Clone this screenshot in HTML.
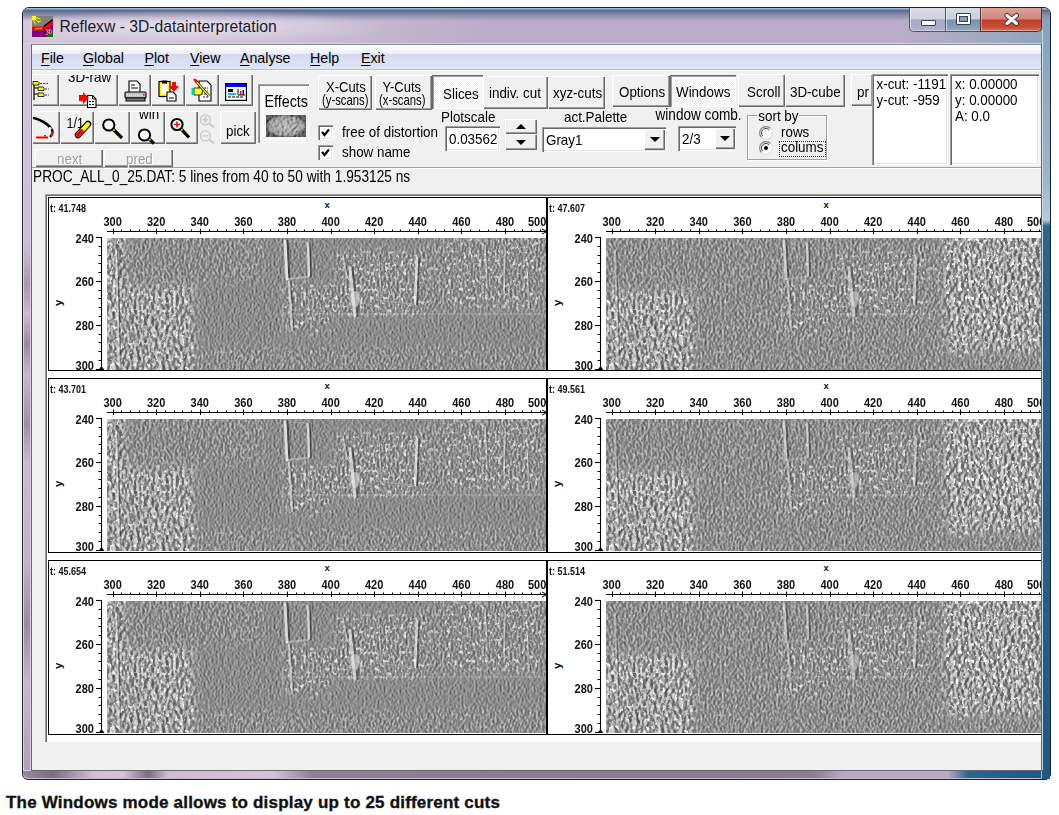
<!DOCTYPE html><html><head><meta charset="utf-8"><style>
html,body{margin:0;padding:0;background:#fff;width:1059px;height:815px;overflow:hidden;position:relative;font-family:"Liberation Sans",sans-serif;}
.t{position:absolute;white-space:nowrap;color:#000;line-height:1;}
div{box-sizing:border-box;}
</style></head><body>
<div style="position:absolute;left:22px;top:7px;width:1029px;height:773px;border:1px solid #1b2230;border-radius:7px 7px 6px 6px;background:#bcaeca;"></div>
<div style="position:absolute;left:23px;top:8px;width:1027px;height:36px;border-radius:6px 6px 0 0;background:linear-gradient(90deg,#d2c8da 0%,#cbbfd4 25%,#bcaccb 45%,#bcaccb 85%,#a8aac4 92%,#8aa4bc 100%);"></div>
<div style="position:absolute;left:23px;top:8px;width:1027px;height:14px;border-radius:6px 6px 0 0;background:linear-gradient(180deg,#a9bacb 0px,#a9bacb 1px,#4d6a8c 2px,#8c8cac 7px,rgba(188,172,203,0) 13px);"></div>
<div style="position:absolute;left:30px;top:10px;width:360px;height:34px;background:radial-gradient(ellipse 55% 50% at 45% 50%,rgba(238,234,242,0.85) 0%,rgba(225,216,232,0.5) 55%,rgba(200,190,210,0) 100%);"></div>
<div style="position:absolute;left:23px;top:43px;width:1018px;height:1px;background:#ddd2e4;"></div>
<div style="position:absolute;left:23px;top:44px;width:8px;height:726px;background:linear-gradient(180deg,#d2c6da 0px,#cdbfd6 200px,#a898ac 240px,#cbbad0 270px,#9a8aa0 300px,#c8b8cc 330px,#a090a6 380px,#cbbbd0 420px,#c2b2c8 520px,#9a8aa0 580px,#c8b8cc 640px,#b0a0b4 726px);box-shadow:inset 1px 0 0 #ddd4e2, inset -1px 0 0 #d8cde0;"></div>
<div style="position:absolute;left:23px;top:770px;width:1018px;height:9px;border-radius:0 0 0 6px;background:linear-gradient(90deg,#9a8aa0 0px,#7c6c80 30px,#d2bed6 70px,#d6c2da 100px,#7c6c80 125px,#d0bcd4 145px,#d4c2d8 250px,#8e7e94 290px,#8a7c90 650px,#8a7e90 790px,#b8a8c8 820px,#b8a8c8 925px,#2a6590 945px,#1e5a84 100%);box-shadow:inset 0 1px 0 #d8cde0, inset 0 -1px 0 #c8bccc;"></div>
<div style="position:absolute;left:1042px;top:30px;width:8px;height:749px;background:linear-gradient(180deg,#86a4bc 0px,#9ab6ca 150px,#b8ccda 190px,#2a6590 196px,#1e5a84 100%);box-shadow:inset 1px 0 0 #c8d8e4;"></div>
<div style="position:absolute;left:1042px;top:770px;width:8px;height:9px;border-radius:0 0 6px 0;background:#1e5a84;"></div>
<div style="position:absolute;left:31px;top:44px;width:1011px;height:727px;border:1px solid #6a6670;border-top-color:#8a8690;background:#f0f0f0;"></div>
<svg style="position:absolute;left:32px;top:16px" width="21" height="21" viewBox="0 0 21 21">
<rect x="0" y="0" width="21" height="21" fill="#808080"/>
<rect x="0" y="10.5" width="12" height="4" fill="#ff0000"/>
<rect x="0" y="14.5" width="12" height="6.5" fill="#800080"/>
<polygon points="12,10 21,3.5 21,8.5 12,14.5" fill="#ff0000"/>
<polygon points="12,14.5 21,8.5 21,21 12,21" fill="#800080"/>
<polygon points="14,21 21,16 21,21" fill="#008000"/>
<path d="M12 10 L21 3.5" stroke="#000" stroke-width="1.2"/>
<path d="M12 10 V21" stroke="#400040" stroke-width="0.8"/>
<path d="M3 12.5 h7" stroke="#ffa000" stroke-width="1.6" stroke-dasharray="2 0.6"/>
<circle cx="2" cy="2" r="2.6" fill="#ffff00"/>
<path d="M4 4 L7 7 M5 2 L8.5 3 M2 5 L3.5 8.5 M6 5.5 L9 5" stroke="#ffff00" stroke-width="0.9"/>
<path d="M14 14 h2.5 l-1.5 2 h1.5 l-1 2.5 h-2 M17.5 13 v5 q2.5 -0.5 2 -3 q-0.5 -2 -2 -2" stroke="#e0a030" stroke-width="0.9" fill="none"/>
</svg>
<div class="t" style="left:59.5px;top:19.21px;font-size:15.7px;transform:scaleY(1.0);transform-origin:0 13.29px;color:#1a1a2a;">Reflexw - 3D-datainterpretation</div>
<div style="position:absolute;left:909px;top:8px;width:37px;height:24px;border:1px solid #4e5664;border-top:none;border-radius:0 0 0 5px;background:linear-gradient(180deg,#dcdce8 0%,#d0d0e0 48%,#a4a6c6 52%,#b0b4d0 100%);box-shadow:inset 1px 0 0 rgba(255,255,255,0.5), inset 0 -1px 0 rgba(255,255,255,0.4);"></div>
<div style="position:absolute;left:945px;top:8px;width:36px;height:24px;border:1px solid #4e5664;border-top:none;background:linear-gradient(180deg,#d8dce6 0%,#c8d0dc 48%,#7890a8 52%,#90a8bc 100%);box-shadow:inset 1px 0 0 rgba(255,255,255,0.5), inset 0 -1px 0 rgba(255,255,255,0.4);"></div>
<div style="position:absolute;left:980px;top:8px;width:62px;height:24px;border:1px solid #5a3028;border-top:none;border-radius:0 0 5px 0;background:linear-gradient(180deg,#dca49c 0%,#d08478 48%,#c03e28 52%,#c85038 85%,#d87860 100%);box-shadow:inset 1px 0 0 rgba(255,255,255,0.35), inset 0 -1px 0 rgba(255,255,255,0.3);"></div>
<div style="position:absolute;left:921px;top:20px;width:15px;height:6px;background:#fff;border:1px solid #3a4050;border-radius:1px;"></div>
<div style="position:absolute;left:956px;top:13px;width:15px;height:12px;border:1px solid #3a4050;background:#fff;border-radius:1px;"></div>
<div style="position:absolute;left:959px;top:16px;width:9px;height:6px;border:1px solid #3a4050;background:#8a9cb4;"></div>
<svg style="position:absolute;left:1003px;top:12px" width="18" height="15"><path d="M4 3.5 L13.5 11.5 M13.5 3.5 L4 11.5" stroke="#4a3a3a" stroke-width="5" stroke-linecap="round"/><path d="M4 3.5 L13.5 11.5 M13.5 3.5 L4 11.5" stroke="#fff" stroke-width="3" stroke-linecap="round"/></svg>
<div style="position:absolute;left:32px;top:45px;width:1009px;height:25px;background:linear-gradient(180deg,#ffffff 0px,#f6f7fb 4px,#eceff8 8.5px,#d4daee 9.5px,#d8deef 14px,#dfe5f4 23px);border-bottom:1px solid #b8c0d4;"></div>
<div style="position:absolute;left:32px;top:70px;width:1009px;height:1px;background:#f8f8f8;"></div>
<div class="t" style="left:41px;top:51.3px;font-size:14.2px;color:#000;"><span style="text-decoration:underline;text-underline-offset:1.5px">F</span>ile</div>
<div class="t" style="left:83px;top:51.3px;font-size:14.2px;color:#000;"><span style="text-decoration:underline;text-underline-offset:1.5px">G</span>lobal</div>
<div class="t" style="left:144.5px;top:51.3px;font-size:14.2px;color:#000;"><span style="text-decoration:underline;text-underline-offset:1.5px">P</span>lot</div>
<div class="t" style="left:190px;top:51.3px;font-size:14.2px;color:#000;"><span style="text-decoration:underline;text-underline-offset:1.5px">V</span>iew</div>
<div class="t" style="left:240px;top:51.3px;font-size:14.2px;color:#000;"><span style="text-decoration:underline;text-underline-offset:1.5px">A</span>nalyse</div>
<div class="t" style="left:310px;top:51.3px;font-size:14.2px;color:#000;"><span style="text-decoration:underline;text-underline-offset:1.5px">H</span>elp</div>
<div class="t" style="left:361px;top:51.3px;font-size:14.2px;color:#000;"><span style="text-decoration:underline;text-underline-offset:1.5px">E</span>xit</div>
<div style="position:absolute;left:32px;top:167px;width:1009px;height:1px;background:#a0a0a0;"></div>
<div style="position:absolute;left:32px;top:168px;width:1009px;height:1px;background:#fff;"></div>
<div style="position:absolute;left:32px;top:74px;width:27px;height:32px;background:#f0f0f0;box-shadow:inset 1px 1px 0 #fff, inset -1px -1px 0 #696969, inset -2px -2px 0 #a0a0a0;"></div>
<div style="position:absolute;left:59px;top:74px;width:59px;height:32px;background:#f0f0f0;box-shadow:inset 1px 1px 0 #fff, inset -1px -1px 0 #696969, inset -2px -2px 0 #a0a0a0;"></div>
<div style="position:absolute;left:118px;top:74px;width:33px;height:32px;background:#f0f0f0;box-shadow:inset 1px 1px 0 #fff, inset -1px -1px 0 #696969, inset -2px -2px 0 #a0a0a0;"></div>
<div style="position:absolute;left:151px;top:74px;width:34px;height:32px;background:#f0f0f0;box-shadow:inset 1px 1px 0 #fff, inset -1px -1px 0 #696969, inset -2px -2px 0 #a0a0a0;"></div>
<div style="position:absolute;left:185px;top:74px;width:34px;height:32px;background:#f0f0f0;box-shadow:inset 1px 1px 0 #fff, inset -1px -1px 0 #696969, inset -2px -2px 0 #a0a0a0;"></div>
<div style="position:absolute;left:219px;top:74px;width:34px;height:32px;background:#f0f0f0;box-shadow:inset 1px 1px 0 #fff, inset -1px -1px 0 #696969, inset -2px -2px 0 #a0a0a0;"></div>
<div style="position:absolute;left:32px;top:111px;width:28px;height:33px;background:#f0f0f0;box-shadow:inset 1px 1px 0 #fff, inset -1px -1px 0 #696969, inset -2px -2px 0 #a0a0a0;"></div>
<div style="position:absolute;left:60px;top:111px;width:34px;height:33px;background:#f0f0f0;box-shadow:inset 1px 1px 0 #fff, inset -1px -1px 0 #696969, inset -2px -2px 0 #a0a0a0;"></div>
<div style="position:absolute;left:94px;top:111px;width:36px;height:33px;background:#f0f0f0;box-shadow:inset 1px 1px 0 #fff, inset -1px -1px 0 #696969, inset -2px -2px 0 #a0a0a0;"></div>
<div style="position:absolute;left:130px;top:111px;width:35px;height:33px;background:#f0f0f0;box-shadow:inset 1px 1px 0 #fff, inset -1px -1px 0 #696969, inset -2px -2px 0 #a0a0a0;"></div>
<div style="position:absolute;left:165px;top:111px;width:33px;height:33px;background:#f0f0f0;box-shadow:inset 1px 1px 0 #fff, inset -1px -1px 0 #696969, inset -2px -2px 0 #a0a0a0;"></div>
<div style="position:absolute;left:220px;top:111px;width:36px;height:33px;background:#f0f0f0;box-shadow:inset 1px 1px 0 #fff, inset -1px -1px 0 #696969, inset -2px -2px 0 #a0a0a0;"></div>
<div class="t" style="left:226px;top:124.66px;font-size:13.4px;transform:scaleY(1.15);transform-origin:0 11.34px;">pick</div>
<div style="position:absolute;left:35px;top:149px;width:68px;height:18px;background:#f0f0f0;box-shadow:inset 1px 1px 0 #fff, inset -1px -1px 0 #696969, inset -2px -2px 0 #a0a0a0;"></div>
<div style="position:absolute;left:104px;top:149px;width:69px;height:18px;background:#f0f0f0;box-shadow:inset 1px 1px 0 #fff, inset -1px -1px 0 #696969, inset -2px -2px 0 #a0a0a0;"></div>
<div class="t" style="left:57px;top:152.66px;font-size:13.4px;transform:scaleY(1.15);transform-origin:0 11.34px;color:#a0a0a0;text-shadow:1px 1px 0 #fff;">next</div>
<div class="t" style="left:126px;top:152.66px;font-size:13.4px;transform:scaleY(1.15);transform-origin:0 11.34px;color:#a0a0a0;text-shadow:1px 1px 0 #fff;">pred</div>
<div style="position:absolute;left:60px;top:75px;width:56px;height:12px;overflow:hidden"><div class="t" style="left:8px;top:-4.3px;font-size:13.4px;transform:scaleY(1.15);transform-origin:0 12px">3D-raw</div></div>
<div style="position:absolute;left:131px;top:112px;width:32px;height:10px;overflow:hidden"><div class="t" style="left:8px;top:-3.8px;font-size:13.4px;transform:scaleY(1.15);transform-origin:0 12px">win</div></div>
<div style="position:absolute;left:258px;top:84px;width:51px;height:59px;background:repeating-conic-gradient(#fff 0% 25%, #f0f0f0 0% 50%) 0 0/2px 2px;box-shadow:inset 1px 1px 0 #a0a0a0, inset 2px 2px 0 #888, inset -1px -1px 0 #fff, inset -2px -2px 0 #e8e8e8;"></div>
<div class="t" style="left:264.5px;top:95.40px;font-size:14.3px;transform:scaleY(1.15);transform-origin:0 12.10px;">Effects</div>
<svg style="position:absolute;left:266px;top:115px" width="40" height="22"><defs><filter id="fe" x="0" y="0" width="100%" height="100%"><feTurbulence type="fractalNoise" baseFrequency="0.35" numOctaves="2" seed="7"/><feColorMatrix type="matrix" values="0 0 0 0 0  0 0 0 0 0  0 0 0 0 0  1 0 0 0 0" result="h"/><feGaussianBlur stdDeviation="0.6" result="hb"/><feDiffuseLighting in="hb" surfaceScale="2" diffuseConstant="1.6" lighting-color="#a0a0a0"><feDistantLight azimuth="200" elevation="40"/></feDiffuseLighting></filter><radialGradient id="eg"><stop offset="0" stop-color="#fff" stop-opacity="0.3"/><stop offset="0.7" stop-color="#fff" stop-opacity="0"/><stop offset="1" stop-color="#000" stop-opacity="0.4"/></radialGradient></defs><rect width="40" height="22" filter="url(#fe)"/><rect width="40" height="22" fill="url(#eg)"/></svg>
<div style="position:absolute;left:318px;top:75px;width:54px;height:35px;background:#f0f0f0;box-shadow:inset 1px 1px 0 #fff, inset -1px -1px 0 #696969, inset -2px -2px 0 #a0a0a0;"></div>
<div class="t" style="left:326px;top:81.00px;font-size:13px;transform:scaleY(1.1);transform-origin:0 11.00px;">X-Cuts</div>
<div class="t" style="left:322px;top:96.43px;font-size:11.3px;transform:scaleY(1.25);transform-origin:0 9.57px;">(y-scans)</div>
<div style="position:absolute;left:375px;top:75px;width:57px;height:35px;background:#f0f0f0;box-shadow:inset 1px 1px 0 #fff, inset -1px -1px 0 #696969, inset -2px -2px 0 #a0a0a0;"></div>
<div class="t" style="left:382.5px;top:81.00px;font-size:13px;transform:scaleY(1.1);transform-origin:0 11.00px;">Y-Cuts</div>
<div class="t" style="left:379px;top:96.43px;font-size:11.3px;transform:scaleY(1.25);transform-origin:0 9.57px;">(x-scans)</div>
<div style="position:absolute;left:432px;top:75px;width:51px;height:34px;background:#f7f7f7;box-shadow:inset 1px 1px 0 #696969, inset 2px 2px 0 #a0a0a0, inset -1px -1px 0 #fff;background:repeating-conic-gradient(#fff 0% 25%, #f0f0f0 0% 50%) 0 0/2px 2px;"></div>
<div class="t" style="left:443px;top:87.66px;font-size:13.4px;transform:scaleY(1.15);transform-origin:0 11.34px;">Slices</div>
<div style="position:absolute;left:483px;top:76px;width:65px;height:33px;background:#f0f0f0;box-shadow:inset 1px 1px 0 #fff, inset -1px -1px 0 #696969, inset -2px -2px 0 #a0a0a0;"></div>
<div class="t" style="left:489px;top:87.16px;font-size:13.4px;transform:scaleY(1.15);transform-origin:0 11.34px;">indiv. cut</div>
<div style="position:absolute;left:548px;top:76px;width:57px;height:33px;background:#f0f0f0;box-shadow:inset 1px 1px 0 #fff, inset -1px -1px 0 #696969, inset -2px -2px 0 #a0a0a0;"></div>
<div class="t" style="left:553px;top:87.16px;font-size:13.4px;transform:scaleY(1.15);transform-origin:0 11.34px;">xyz-cuts</div>
<div style="position:absolute;left:612px;top:75px;width:58px;height:32px;background:#f0f0f0;box-shadow:inset 1px 1px 0 #fff, inset -1px -1px 0 #696969, inset -2px -2px 0 #a0a0a0;"></div>
<div class="t" style="left:619px;top:85.66px;font-size:13.4px;transform:scaleY(1.15);transform-origin:0 11.34px;">Options</div>
<div style="position:absolute;left:670px;top:75px;width:66px;height:32px;background:#f7f7f7;box-shadow:inset 1px 1px 0 #696969, inset 2px 2px 0 #a0a0a0, inset -1px -1px 0 #fff;background:repeating-conic-gradient(#fff 0% 25%, #f0f0f0 0% 50%) 0 0/2px 2px;"></div>
<div class="t" style="left:676px;top:86.16px;font-size:13.4px;transform:scaleY(1.15);transform-origin:0 11.34px;">Windows</div>
<div style="position:absolute;left:738px;top:74px;width:47px;height:33px;background:#f0f0f0;box-shadow:inset 1px 1px 0 #fff, inset -1px -1px 0 #696969, inset -2px -2px 0 #a0a0a0;"></div>
<div class="t" style="left:747px;top:85.66px;font-size:13.4px;transform:scaleY(1.15);transform-origin:0 11.34px;">Scroll</div>
<div style="position:absolute;left:785px;top:74px;width:60px;height:33px;background:#f0f0f0;box-shadow:inset 1px 1px 0 #fff, inset -1px -1px 0 #696969, inset -2px -2px 0 #a0a0a0;"></div>
<div class="t" style="left:790px;top:85.66px;font-size:13.4px;transform:scaleY(1.15);transform-origin:0 11.34px;">3D-cube</div>
<div style="position:absolute;left:851px;top:74px;width:22px;height:32px;background:#f0f0f0;box-shadow:inset 1px 1px 0 #fff, inset -1px -1px 0 #696969, inset -2px -2px 0 #a0a0a0;"></div>
<div class="t" style="left:857px;top:85.66px;font-size:13.4px;transform:scaleY(1.15);transform-origin:0 11.34px;">pr</div>
<div style="position:absolute;left:318px;top:125px;width:15px;height:15px;background:#fff;box-shadow:inset 1px 1px 0 #a0a0a0, inset 2px 2px 0 #696969, inset -1px -1px 0 #fff, inset -2px -2px 0 #e3e3e3;"></div>
<svg style="position:absolute;left:320px;top:127px" width="11" height="11"><path d="M2 5 L4.5 8 L9 2.5" stroke="#000" stroke-width="2.2" fill="none"/></svg>
<div class="t" style="left:342px;top:126.36px;font-size:13.4px;transform:scaleY(1.15);transform-origin:0 11.34px;">free of distortion</div>
<div style="position:absolute;left:318px;top:145px;width:15px;height:15px;background:#fff;box-shadow:inset 1px 1px 0 #a0a0a0, inset 2px 2px 0 #696969, inset -1px -1px 0 #fff, inset -2px -2px 0 #e3e3e3;"></div>
<svg style="position:absolute;left:320px;top:147px" width="11" height="11"><path d="M2 5 L4.5 8 L9 2.5" stroke="#000" stroke-width="2.2" fill="none"/></svg>
<div class="t" style="left:342px;top:146.36px;font-size:13.4px;transform:scaleY(1.15);transform-origin:0 11.34px;">show name</div>
<div class="t" style="left:441px;top:110.66px;font-size:13.4px;transform:scaleY(1.15);transform-origin:0 11.34px;">Plotscale</div>
<div style="position:absolute;left:445px;top:126px;width:55px;height:25px;background:#fff;box-shadow:inset 1px 1px 0 #a0a0a0, inset 2px 2px 0 #696969, inset -1px -1px 0 #fff, inset -2px -2px 0 #e3e3e3;"></div>
<div class="t" style="left:449px;top:132.66px;font-size:13.4px;transform:scaleY(1.15);transform-origin:0 11.34px;">0.03562</div>
<div style="position:absolute;left:505px;top:119px;width:32px;height:15px;background:#f0f0f0;box-shadow:inset 1px 1px 0 #fff, inset -1px -1px 0 #696969, inset -2px -2px 0 #a0a0a0;"></div>
<div style="position:absolute;left:505px;top:134px;width:32px;height:16px;background:#f0f0f0;box-shadow:inset 1px 1px 0 #fff, inset -1px -1px 0 #696969, inset -2px -2px 0 #a0a0a0;"></div>
<svg style="position:absolute;left:515px;top:123px" width="12" height="8"><path d="M6 1 L11 6 L1 6 Z" fill="#000"/></svg>
<svg style="position:absolute;left:515px;top:139px" width="12" height="8"><path d="M1 1 L11 1 L6 6 Z" fill="#000"/></svg>
<div class="t" style="left:564px;top:110.66px;font-size:13.4px;transform:scaleY(1.15);transform-origin:0 11.34px;">act.Palette</div>
<div style="position:absolute;left:542px;top:127px;width:124px;height:25px;background:#fff;box-shadow:inset 1px 1px 0 #a0a0a0, inset 2px 2px 0 #696969, inset -1px -1px 0 #fff, inset -2px -2px 0 #e3e3e3;"></div>
<div class="t" style="left:546px;top:133.66px;font-size:13.4px;transform:scaleY(1.15);transform-origin:0 11.34px;">Gray1</div>
<div style="position:absolute;left:644px;top:129px;width:21px;height:21px;background:#f0f0f0;box-shadow:inset 1px 1px 0 #fff, inset -1px -1px 0 #696969, inset -2px -2px 0 #a0a0a0;"></div>
<svg style="position:absolute;left:649px;top:136px" width="12" height="8"><path d="M1 1 L11 1 L6 6 Z" fill="#000"/></svg>
<div class="t" style="left:655.5px;top:108.69px;font-size:13.6px;transform:scaleY(1.15);transform-origin:0 11.51px;">window comb.</div>
<div style="position:absolute;left:678px;top:126px;width:58px;height:25px;background:#fff;box-shadow:inset 1px 1px 0 #a0a0a0, inset 2px 2px 0 #696969, inset -1px -1px 0 #fff, inset -2px -2px 0 #e3e3e3;"></div>
<div class="t" style="left:682px;top:132.66px;font-size:13.4px;transform:scaleY(1.15);transform-origin:0 11.34px;">2/3</div>
<div style="position:absolute;left:715px;top:128px;width:20px;height:21px;background:#f0f0f0;box-shadow:inset 1px 1px 0 #fff, inset -1px -1px 0 #696969, inset -2px -2px 0 #a0a0a0;"></div>
<svg style="position:absolute;left:719px;top:135px" width="12" height="8"><path d="M1 1 L11 1 L6 6 Z" fill="#000"/></svg>
<div style="position:absolute;left:747px;top:115px;width:80px;height:45px;border:1px solid #a0a0a0;box-shadow:1px 1px 0 #fff, inset 1px 1px 0 #fff;"></div>
<div style="position:absolute;left:757px;top:110px;width:42px;height:12px;background:#f0f0f0;"></div>
<div class="t" style="left:758.3px;top:109.86px;font-size:13.4px;transform:scaleY(1.15);transform-origin:0 11.34px;">sort by</div>
<svg style="position:absolute;left:759px;top:126px" width="14" height="14"><circle cx="7" cy="7" r="6" fill="#fff"/><path d="M2.5 11.5 A6 6 0 0 1 11.5 2.5" stroke="#808080" stroke-width="1.2" fill="none"/><path d="M3.8 10.2 A4.3 4.3 0 0 1 10.2 3.8" stroke="#404040" stroke-width="1" fill="none"/><path d="M11.5 2.5 A6 6 0 0 1 2.5 11.5" stroke="#e3e3e3" stroke-width="1.2" fill="none"/></svg>
<div class="t" style="left:781px;top:125.96px;font-size:13.4px;transform:scaleY(1.15);transform-origin:0 11.34px;">rows</div>
<svg style="position:absolute;left:759px;top:141px" width="14" height="14"><circle cx="7" cy="7" r="6" fill="#fff"/><path d="M2.5 11.5 A6 6 0 0 1 11.5 2.5" stroke="#808080" stroke-width="1.2" fill="none"/><path d="M3.8 10.2 A4.3 4.3 0 0 1 10.2 3.8" stroke="#404040" stroke-width="1" fill="none"/><path d="M11.5 2.5 A6 6 0 0 1 2.5 11.5" stroke="#e3e3e3" stroke-width="1.2" fill="none"/><circle cx="7" cy="7" r="2" fill="#000"/></svg>
<div class="t" style="left:781px;top:140.96px;font-size:13.4px;transform:scaleY(1.15);transform-origin:0 11.34px;">colums</div>
<div style="position:absolute;left:779px;top:141px;width:47px;height:16px;border:1px dotted #333;"></div>
<div style="position:absolute;left:872px;top:74px;width:76px;height:91px;background:#fff;box-shadow:inset 1px 1px 0 #a0a0a0, inset 2px 2px 0 #696969, inset -1px -1px 0 #fff, inset -2px -2px 0 #e3e3e3;"></div>
<div class="t" style="left:876.5px;top:78.16px;font-size:13.4px;transform:scaleY(1.15);transform-origin:0 11.34px;">x-cut: -1191</div>
<div class="t" style="left:876.5px;top:94.16px;font-size:13.4px;transform:scaleY(1.15);transform-origin:0 11.34px;">y-cut: -959</div>
<div style="position:absolute;left:950px;top:74px;width:89px;height:91px;background:#fff;box-shadow:inset 1px 1px 0 #a0a0a0, inset 2px 2px 0 #696969, inset -1px -1px 0 #fff, inset -2px -2px 0 #e3e3e3;"></div>
<div class="t" style="left:955px;top:78.16px;font-size:13.4px;transform:scaleY(1.15);transform-origin:0 11.34px;">x: 0.00000</div>
<div class="t" style="left:955px;top:94.16px;font-size:13.4px;transform:scaleY(1.15);transform-origin:0 11.34px;">y: 0.00000</div>
<div class="t" style="left:955px;top:110.16px;font-size:13.4px;transform:scaleY(1.15);transform-origin:0 11.34px;">A: 0.0</div>
<svg style="position:absolute;left:32px;top:78px;overflow:visible" width="20" height="24" viewBox="0 0 20 24"><path d="M2 4 V22 M2 10 H6 M2 16 H6" stroke="#000" stroke-width="1.2" fill="none"/><path d="M1 3.5 h5 l1 1 v2.5 h-6 z" fill="#ff0" stroke="#000" stroke-width="0.8"/><path d="M6 9 h5 l1 1 v2.5 h-6 z" fill="#ff0" stroke="#000" stroke-width="0.8"/><path d="M6 15 h5 l1 1 v2.5 h-6 z" fill="#ff0" stroke="#000" stroke-width="0.8"/><path d="M8 5.5 H16 M13 11 H17 M13 17 H17" stroke="#333" stroke-width="1.2" stroke-dasharray="2 1.2" fill="none"/></svg>
<svg style="position:absolute;left:78px;top:90px;overflow:visible" width="24" height="18" viewBox="0 0 24 18"><path d="M9.5 5.5 h5 l3.5 3.5 v8.5 h-8.5 z" fill="#fff" stroke="#000" stroke-width="1.1"/><path d="M14.5 5.5 v3.5 h3.5" fill="none" stroke="#000" stroke-width="0.9"/><path d="M11 11.5 h6 M11 14.5 h6" stroke="#000" stroke-width="1" stroke-dasharray="2 1"/><path d="M1 5 h4 v-3 l6 6 l-6 6 v-3 h-4 z" fill="#f00"/></svg>
<svg style="position:absolute;left:124px;top:80px;overflow:visible" width="24" height="22" viewBox="0 0 24 22"><path d="M5 1 h8 l3 3 v9 h-11 z" fill="#fff" stroke="#000" stroke-width="1.1"/><path d="M7 5 h4 M7 8 h7" stroke="#000" stroke-width="1"/><rect x="1" y="12" width="21" height="6" rx="1" fill="#c0c0c0" stroke="#000" stroke-width="1.1"/><path d="M3 15 h15" stroke="#fff" stroke-width="1" stroke-dasharray="1 1"/><rect x="19" y="14" width="1.5" height="1.5" fill="#f00"/><rect x="2" y="18" width="19" height="3" fill="#808080" stroke="#000" stroke-width="1"/></svg>
<svg style="position:absolute;left:158px;top:80px;overflow:visible" width="24" height="22" viewBox="0 0 24 22"><rect x="1" y="1.5" width="11" height="15" fill="#ff0" stroke="#000" stroke-width="1.2"/><rect x="3" y="4" width="7" height="10" fill="#fff"/><rect x="4" y="0.5" width="5" height="3" fill="#000"/><path d="M9 12 h6 l3 3 v6 h-9 z" fill="#fff" stroke="#000" stroke-width="1.1"/><path d="M11 18 h5" stroke="#000" stroke-width="1"/><path d="M14 2 h4 v4 h3 l-5 6 l-5 -6 h3 z" fill="#f00"/></svg>
<svg style="position:absolute;left:191px;top:79px;overflow:visible" width="24" height="23" viewBox="0 0 24 23"><path d="M8 2 h8 l4 4 v16 h-12 z" fill="#fff" stroke="#000" stroke-width="1.1"/><path d="M10 9 h7 M10 12 h7 M10 15 h7 M12 18 h5" stroke="#000" stroke-width="0.9" stroke-dasharray="2 1"/><path d="M3 9 h7 l2 3 l-2 4 h-7 z" fill="#ff0" stroke="#000" stroke-width="0.8"/><rect x="0.5" y="9" width="3" height="7" fill="#0cc"/><path d="M4 1 L18 17" stroke="#000" stroke-width="2.6"/><path d="M4 1 L18 17" stroke="#ff0" stroke-width="1.2"/><path d="M3 0 L6 3" stroke="#f00" stroke-width="2"/></svg>
<svg style="position:absolute;left:225px;top:83px;overflow:visible" width="22" height="18" viewBox="0 0 22 18"><rect x="0.6" y="0.6" width="20.8" height="16.8" fill="#fff" stroke="#000" stroke-width="1.2"/><rect x="1" y="1" width="20" height="3" fill="#00f"/><rect x="3" y="6" width="5" height="3" fill="#000"/><rect x="3" y="10" width="8" height="2" fill="#0cc"/><path d="M3 14 h16" stroke="#000" stroke-width="1.2" stroke-dasharray="3 1"/><path d="M13 6 v6 h7" stroke="#000" stroke-width="1" fill="none"/><rect x="15" y="8" width="1.5" height="4" fill="#f00"/><rect x="17.5" y="7" width="1.5" height="5" fill="#00f"/></svg>
<svg style="position:absolute;left:33px;top:116px;overflow:visible" width="24" height="24" viewBox="0 0 24 24"><path d="M1 2 C8 4 14 8 17 11" stroke="#000" stroke-width="2.6" fill="none" stroke-linecap="round"/><path d="M16 11 C20 13 21 17 17 21" stroke="#000" stroke-width="2.2" fill="none"/><circle cx="17" cy="12.5" r="1.5" fill="#fff"/><path d="M18 15 C21 16 21 19 18 21 z" fill="#f00"/><path d="M3 21.5 H15" stroke="#f00" stroke-width="2"/><rect x="11" y="19" width="2" height="1.5" fill="#f00"/></svg>
<div class="t" style="left:66.5px;top:116px;font-size:12.5px;transform:scaleY(1.15);transform-origin:0 0">1/1</div>
<svg style="position:absolute;left:75px;top:121px;overflow:visible" width="16" height="18" viewBox="0 0 16 18"><path d="M3 14 L13 3" stroke="#000" stroke-width="6.5" stroke-linecap="round"/><path d="M3.2 13.8 L12.8 3.2" stroke="#ff0" stroke-width="4.3" stroke-linecap="round"/><path d="M3.2 13.8 L6.5 10.2" stroke="#f00" stroke-width="4.3" stroke-linecap="round"/></svg>
<svg style="position:absolute;left:0;top:0;overflow:visible" width="1" height="1"><circle cx="108.8" cy="125" r="5.6" fill="#fff" stroke="#000" stroke-width="2.0"/><path d="M113.4 129.5 L122 138" stroke="#000" stroke-width="3.2"/><path d="M113.4 129.5 L114.6 130.7" stroke="#ff0" stroke-width="1.5"/></svg>
<svg style="position:absolute;left:0;top:0;overflow:visible" width="1" height="1"><circle cx="144.5" cy="135" r="5.6" fill="#fff" stroke="#000" stroke-width="2.0"/><path d="M149.3 139.3 L154 143.5" stroke="#000" stroke-width="3.2"/><path d="M149.3 139.3 L150.5 140.5" stroke="#ff0" stroke-width="1.5"/></svg>
<svg style="position:absolute;left:0;top:0;overflow:visible" width="1" height="1"><circle cx="177" cy="124.5" r="5.6" fill="#fff" stroke="#000" stroke-width="2.0"/><path d="M181.3 129.2 L189 137.5" stroke="#000" stroke-width="3.2"/><path d="M181.3 129.2 L182.5 130.4" stroke="#ff0" stroke-width="1.5"/><path d="M174 124.5 h6 M177 121.5 v6" stroke="#f00" stroke-width="1.6"/></svg>
<svg style="position:absolute;left:0;top:0;overflow:visible" width="1" height="1"><circle cx="205.4" cy="119.8" r="5" fill="none" stroke="#c8c8c8" stroke-width="1.3"/><path d="M209.7 123.7 L214 127.5" stroke="#c8c8c8" stroke-width="2.2"/><path d="M202.4 119.8 h6 M205.4 116.8 v6" stroke="#c8c8c8" stroke-width="1.6"/></svg>
<svg style="position:absolute;left:0;top:0;overflow:visible" width="1" height="1"><circle cx="205.4" cy="135.9" r="5" fill="none" stroke="#c8c8c8" stroke-width="1.3"/><path d="M209.7 139.7 L214 143.5" stroke="#c8c8c8" stroke-width="2.2"/><path d="M202.4 135.9 h6" stroke="#c8c8c8" stroke-width="1.4"/></svg>
<div class="t" style="left:33px;top:171.40px;font-size:13.7px;transform:scaleY(1.15);transform-origin:0 11.60px;">PROC_ALL_0_25.DAT: 5 lines from 40 to 50 with 1.953125 ns</div>
<div style="position:absolute;left:45px;top:194px;width:996px;height:548px;background:#fff;box-shadow:inset 1px 1px 0 #a0a0a0, inset 2px 2px 0 #696969;"></div>
<svg width="0" height="0" style="position:absolute">
<defs>
<filter id="fw" x="0" y="0" width="100%" height="100%" color-interpolation-filters="sRGB">
<feTurbulence type="fractalNoise" baseFrequency="0.5 0.36" numOctaves="2" seed="4" result="t"/>
<feColorMatrix in="t" type="matrix" values="0 0 0 0 0  0 0 0 0 0  0 0 0 0 0  1 0 0 0 0" result="h"/>
<feGaussianBlur in="h" stdDeviation="0.4" result="hb"/>
<feDiffuseLighting in="hb" surfaceScale="0.75" diffuseConstant="2" lighting-color="#6d6d6d"><feDistantLight azimuth="180" elevation="40"/></feDiffuseLighting>
</filter>
<filter id="fs" x="0" y="0" width="100%" height="100%" color-interpolation-filters="sRGB">
<feTurbulence type="fractalNoise" baseFrequency="0.28 0.21" numOctaves="2" seed="9" result="t"/>
<feColorMatrix in="t" type="matrix" values="0 0 0 0 0  0 0 0 0 0  0 0 0 0 0  1 0 0 0 0" result="h"/>
<feGaussianBlur in="h" stdDeviation="0.65" result="hb"/>
<feDiffuseLighting in="hb" surfaceScale="2.4" diffuseConstant="2" lighting-color="#6e6e6e"><feDistantLight azimuth="180" elevation="45"/></feDiffuseLighting>
<feComponentTransfer><feFuncR type="table" tableValues="0.3 0.5 1"/><feFuncG type="table" tableValues="0.3 0.5 1"/><feFuncB type="table" tableValues="0.3 0.5 1"/></feComponentTransfer>
</filter>
<filter id="fm" x="0" y="0" width="100%" height="100%" color-interpolation-filters="sRGB">
<feTurbulence type="fractalNoise" baseFrequency="0.46 0.32" numOctaves="2" seed="2" result="t"/>
<feColorMatrix in="t" type="matrix" values="0 0 0 0 0  0 0 0 0 0  0 0 0 0 0  1 0 0 0 0" result="h"/>
<feGaussianBlur in="h" stdDeviation="0.4" result="hb"/>
<feDiffuseLighting in="hb" surfaceScale="1.2" diffuseConstant="2" lighting-color="#6a6a6a"><feDistantLight azimuth="180" elevation="41"/></feDiffuseLighting>
<feComponentTransfer><feFuncR type="table" tableValues="0.25 0.5 1"/><feFuncG type="table" tableValues="0.25 0.5 1"/><feFuncB type="table" tableValues="0.25 0.5 1"/></feComponentTransfer>
</filter>
<filter id="sp" x="0" y="0" width="100%" height="100%" color-interpolation-filters="sRGB">
<feTurbulence type="fractalNoise" baseFrequency="0.32 0.24" numOctaves="2" seed="11"/>
<feColorMatrix type="matrix" values="0 0 0 0 1  0 0 0 0 1  0 0 0 0 1  6 0 0 0 -3.5"/>
<feGaussianBlur stdDeviation="0.55"/>
</filter>
<filter id="mb" x="-10%" y="-10%" width="120%" height="120%"><feGaussianBlur stdDeviation="5"/></filter>
<filter id="blur1"><feGaussianBlur stdDeviation="0.8"/></filter>
<mask id="rs0" maskUnits="userSpaceOnUse" x="0" y="0" width="440" height="132"><path filter="url(#mb)" fill="#fff" d="M-20 48 H88 V160 H-20 Z M-20 -20 H20 V48 H-20 Z"/></mask>
<mask id="rm0" maskUnits="userSpaceOnUse" x="0" y="0" width="440" height="132"><path filter="url(#mb)" fill="#fff" d="M20 -20 H160 V48 H88 V60 H20 Z M175 45 H225 V95 H175 Z M225 10 H320 V80 H225 Z M320 -20 H460 V75 H320 Z M-20 105 H460 V160 H-20 Z"/></mask>
<mask id="rs1" maskUnits="userSpaceOnUse" x="0" y="0" width="440" height="132"><path filter="url(#mb)" fill="#fff" d="M-20 52 H88 V160 H-20 Z M338 -20 H460 V115 H338 Z"/></mask>
<mask id="rm1" maskUnits="userSpaceOnUse" x="0" y="0" width="440" height="132"><path filter="url(#mb)" fill="#fff" d="M-20 -20 H460 V160 H-20 Z"/></mask>
<mask id="rf" maskUnits="userSpaceOnUse" x="0" y="0" width="440" height="132"><path filter="url(#mb)" fill="#fff" d="M175 45 H228 V95 H175 Z M228 12 H322 V78 H228 Z M335 0 H440 V72 H335 Z"/></mask>
</defs></svg>
<div style="position:absolute;left:48px;top:197px;width:499px;height:182px;overflow:hidden;">
<div style="position:absolute;left:0;top:0;width:600px;height:1px;background:#000"></div>
<div style="position:absolute;left:0;top:0;width:1px;height:174px;background:#000"></div>
<div style="position:absolute;left:0;top:173px;width:600px;height:1px;background:#000"></div>
<svg style="position:absolute;left:59px;top:41px" width="440" height="132"><rect width="440" height="132" fill="#8a8a8a"/><rect width="440" height="132" filter="url(#fw)"/><g mask="url(#rm0)"><rect width="440" height="132" filter="url(#fm)"/></g><g mask="url(#rs0)"><rect width="440" height="132" filter="url(#fs)"/></g><g mask="url(#rs0)"><rect width="440" height="132" filter="url(#sp)" opacity="0.85"/></g><g mask="url(#rm0)"><rect width="440" height="132" filter="url(#sp)" opacity="0.3"/></g><g mask="url(#rf)"><rect width="440" height="132" filter="url(#sp)" opacity="0.6"/></g><path d="M10.6 12 L13.6 125" stroke="#1a1a1a" stroke-width="1.58" opacity="0.43" stroke-linecap="round" filter="url(#fb)"/><path d="M9 12 L12 125" stroke="#ffffff" stroke-width="1.98" opacity="0.53" stroke-linecap="round" filter="url(#fb)"/><path d="M180.3 3 L182.3 41" stroke="#1a1a1a" stroke-width="2.29" opacity="0.61" stroke-linecap="round" filter="url(#fb)"/><path d="M178 3 L180 41" stroke="#ffffff" stroke-width="2.86" opacity="0.76" stroke-linecap="round" filter="url(#fb)"/><path d="M202.9 5 L203.9 38" stroke="#1a1a1a" stroke-width="1.94" opacity="0.55" stroke-linecap="round" filter="url(#fb)"/><path d="M201 5 L202 38" stroke="#ffffff" stroke-width="2.42" opacity="0.68" stroke-linecap="round" filter="url(#fb)"/><path d="M182.6 41 L202.6 39" stroke="#1a1a1a" stroke-width="1.58" opacity="0.43" stroke-linecap="round" filter="url(#fb)"/><path d="M181 41 L201 39" stroke="#ffffff" stroke-width="1.98" opacity="0.53" stroke-linecap="round" filter="url(#fb)"/><path d="M185.2 3 L201.2 4" stroke="#1a1a1a" stroke-width="1.23" opacity="0.24" stroke-linecap="round" filter="url(#fb)"/><path d="M184 3 L200 4" stroke="#ffffff" stroke-width="1.54" opacity="0.30" stroke-linecap="round" filter="url(#fb)"/><path d="M183.8 44 L186.8 92" stroke="#1a1a1a" stroke-width="1.76" opacity="0.40" stroke-linecap="round" filter="url(#fb)"/><path d="M182 44 L185 92" stroke="#ffffff" stroke-width="2.20" opacity="0.49" stroke-linecap="round" filter="url(#fb)"/><path d="M245.5 30 L250.5 78" stroke="#1a1a1a" stroke-width="2.46" opacity="0.49" stroke-linecap="round" filter="url(#fb)"/><path d="M243 30 L248 78" stroke="#ffffff" stroke-width="3.08" opacity="0.61" stroke-linecap="round" filter="url(#fb)"/><ellipse cx="248" cy="61" rx="4.5" ry="8" fill="#f0f0f0" opacity="0.57" filter="url(#fb)"/><path d="M237.4 18 L241.4 40" stroke="#1a1a1a" stroke-width="1.41" opacity="0.36" stroke-linecap="round" filter="url(#fb)"/><path d="M236 18 L240 40" stroke="#ffffff" stroke-width="1.76" opacity="0.46" stroke-linecap="round" filter="url(#fb)"/><path d="M312.1 20 L310.1 66" stroke="#1a1a1a" stroke-width="2.11" opacity="0.55" stroke-linecap="round" filter="url(#fb)"/><path d="M310 20 L308 66" stroke="#ffffff" stroke-width="2.64" opacity="0.68" stroke-linecap="round" filter="url(#fb)"/><path d="M271.4 62 L307.4 66" stroke="#1a1a1a" stroke-width="1.41" opacity="0.33" stroke-linecap="round" filter="url(#fb)"/><path d="M270 62 L306 66" stroke="#ffffff" stroke-width="1.76" opacity="0.42" stroke-linecap="round" filter="url(#fb)"/><path d="M273.2 22 L275.2 60" stroke="#1a1a1a" stroke-width="1.23" opacity="0.27" stroke-linecap="round" filter="url(#fb)"/><path d="M272 22 L274 60" stroke="#ffffff" stroke-width="1.54" opacity="0.34" stroke-linecap="round" filter="url(#fb)"/><path d="M379.4 8 L381.4 48" stroke="#1a1a1a" stroke-width="1.41" opacity="0.33" stroke-linecap="round" filter="url(#fb)"/><path d="M378 8 L380 48" stroke="#ffffff" stroke-width="1.76" opacity="0.42" stroke-linecap="round" filter="url(#fb)"/><path d="M399.4 10 L398.4 55" stroke="#1a1a1a" stroke-width="1.41" opacity="0.33" stroke-linecap="round" filter="url(#fb)"/><path d="M398 10 L397 55" stroke="#ffffff" stroke-width="1.76" opacity="0.42" stroke-linecap="round" filter="url(#fb)"/><path d="M421.2 30 L423.2 70" stroke="#1a1a1a" stroke-width="1.23" opacity="0.27" stroke-linecap="round" filter="url(#fb)"/><path d="M420 30 L422 70" stroke="#ffffff" stroke-width="1.54" opacity="0.34" stroke-linecap="round" filter="url(#fb)"/><path d="M180 76 H440" stroke="#fff" stroke-width="1" opacity="0.24"/></svg>
<div class="t" style="left:2px;top:7.9px;font-size:9.0px;font-weight:bold;transform:scaleY(1.16);color:#111">t: 41.748</div>
<div class="t" style="left:276.5px;top:3px;font-size:9.5px;font-weight:bold;color:#111">x</div>
<div class="t" style="left:55.40px;top:20.2px;font-size:11px;font-weight:bold;transform:scaleY(1.1);color:#111">300</div>
<div class="t" style="left:99.00px;top:20.2px;font-size:11px;font-weight:bold;transform:scaleY(1.1);color:#111">320</div>
<div class="t" style="left:142.60px;top:20.2px;font-size:11px;font-weight:bold;transform:scaleY(1.1);color:#111">340</div>
<div class="t" style="left:186.20px;top:20.2px;font-size:11px;font-weight:bold;transform:scaleY(1.1);color:#111">360</div>
<div class="t" style="left:229.80px;top:20.2px;font-size:11px;font-weight:bold;transform:scaleY(1.1);color:#111">380</div>
<div class="t" style="left:273.40px;top:20.2px;font-size:11px;font-weight:bold;transform:scaleY(1.1);color:#111">400</div>
<div class="t" style="left:317.00px;top:20.2px;font-size:11px;font-weight:bold;transform:scaleY(1.1);color:#111">420</div>
<div class="t" style="left:360.60px;top:20.2px;font-size:11px;font-weight:bold;transform:scaleY(1.1);color:#111">440</div>
<div class="t" style="left:404.20px;top:20.2px;font-size:11px;font-weight:bold;transform:scaleY(1.1);color:#111">460</div>
<div class="t" style="left:447.80px;top:20.2px;font-size:11px;font-weight:bold;transform:scaleY(1.1);color:#111">480</div>
<div class="t" style="left:480.00px;top:20.2px;font-size:11px;font-weight:bold;transform:scaleY(1.1);color:#111">500</div>
<div class="t" style="left:27.60px;top:36.50px;font-size:11px;font-weight:bold;transform:scaleY(1.1);color:#111">240</div>
<div class="t" style="left:27.60px;top:80.40px;font-size:11px;font-weight:bold;transform:scaleY(1.1);color:#111">260</div>
<div class="t" style="left:27.60px;top:124.30px;font-size:11px;font-weight:bold;transform:scaleY(1.1);color:#111">280</div>
<div class="t" style="left:27.60px;top:164.40px;font-size:11px;font-weight:bold;transform:scaleY(1.1);color:#111">300</div>
<svg style="position:absolute;left:0;top:0" width="600" height="182"><path d="M59 34.5 H499" stroke="#000" stroke-width="1"/><path d="M53.5 41 V173" stroke="#000" stroke-width="1.1"/><path d="M65.5 31.5 V37" stroke="#000" stroke-width="1.1"/><path d="M108.5 31.5 V37" stroke="#000" stroke-width="1.1"/><path d="M152.5 31.5 V37" stroke="#000" stroke-width="1.1"/><path d="M195.5 31.5 V37" stroke="#000" stroke-width="1.1"/><path d="M239.5 31.5 V37" stroke="#000" stroke-width="1.1"/><path d="M283.5 31.5 V37" stroke="#000" stroke-width="1.1"/><path d="M326.5 31.5 V37" stroke="#000" stroke-width="1.1"/><path d="M370.5 31.5 V37" stroke="#000" stroke-width="1.1"/><path d="M413.5 31.5 V37" stroke="#000" stroke-width="1.1"/><path d="M457.5 31.5 V37" stroke="#000" stroke-width="1.1"/><path d="M501.5 31.5 V37" stroke="#000" stroke-width="1.1"/><path d="M73.5 32.5 V34.5" stroke="#000" stroke-width="1"/><path d="M82.5 32.5 V34.5" stroke="#000" stroke-width="1"/><path d="M91.5 32.5 V34.5" stroke="#000" stroke-width="1"/><path d="M99.5 32.5 V34.5" stroke="#000" stroke-width="1"/><path d="M117.5 32.5 V34.5" stroke="#000" stroke-width="1"/><path d="M126.5 32.5 V34.5" stroke="#000" stroke-width="1"/><path d="M134.5 32.5 V34.5" stroke="#000" stroke-width="1"/><path d="M143.5 32.5 V34.5" stroke="#000" stroke-width="1"/><path d="M161.5 32.5 V34.5" stroke="#000" stroke-width="1"/><path d="M169.5 32.5 V34.5" stroke="#000" stroke-width="1"/><path d="M178.5 32.5 V34.5" stroke="#000" stroke-width="1"/><path d="M187.5 32.5 V34.5" stroke="#000" stroke-width="1"/><path d="M204.5 32.5 V34.5" stroke="#000" stroke-width="1"/><path d="M213.5 32.5 V34.5" stroke="#000" stroke-width="1"/><path d="M222.5 32.5 V34.5" stroke="#000" stroke-width="1"/><path d="M230.5 32.5 V34.5" stroke="#000" stroke-width="1"/><path d="M248.5 32.5 V34.5" stroke="#000" stroke-width="1"/><path d="M256.5 32.5 V34.5" stroke="#000" stroke-width="1"/><path d="M265.5 32.5 V34.5" stroke="#000" stroke-width="1"/><path d="M274.5 32.5 V34.5" stroke="#000" stroke-width="1"/><path d="M291.5 32.5 V34.5" stroke="#000" stroke-width="1"/><path d="M300.5 32.5 V34.5" stroke="#000" stroke-width="1"/><path d="M309.5 32.5 V34.5" stroke="#000" stroke-width="1"/><path d="M317.5 32.5 V34.5" stroke="#000" stroke-width="1"/><path d="M335.5 32.5 V34.5" stroke="#000" stroke-width="1"/><path d="M344.5 32.5 V34.5" stroke="#000" stroke-width="1"/><path d="M352.5 32.5 V34.5" stroke="#000" stroke-width="1"/><path d="M361.5 32.5 V34.5" stroke="#000" stroke-width="1"/><path d="M379.5 32.5 V34.5" stroke="#000" stroke-width="1"/><path d="M387.5 32.5 V34.5" stroke="#000" stroke-width="1"/><path d="M396.5 32.5 V34.5" stroke="#000" stroke-width="1"/><path d="M405.5 32.5 V34.5" stroke="#000" stroke-width="1"/><path d="M422.5 32.5 V34.5" stroke="#000" stroke-width="1"/><path d="M431.5 32.5 V34.5" stroke="#000" stroke-width="1"/><path d="M440.5 32.5 V34.5" stroke="#000" stroke-width="1"/><path d="M448.5 32.5 V34.5" stroke="#000" stroke-width="1"/><path d="M466.5 32.5 V34.5" stroke="#000" stroke-width="1"/><path d="M474.5 32.5 V34.5" stroke="#000" stroke-width="1"/><path d="M483.5 32.5 V34.5" stroke="#000" stroke-width="1"/><path d="M492.5 32.5 V34.5" stroke="#000" stroke-width="1"/><path d="M48 40.5 H54" stroke="#000" stroke-width="1.1"/><path d="M48 84.5 H54" stroke="#000" stroke-width="1.1"/><path d="M48 128.5 H54" stroke="#000" stroke-width="1.1"/><path d="M48 172.5 H54" stroke="#000" stroke-width="1.1"/><path d="M50.5 49.5 H53.5" stroke="#000" stroke-width="1"/><path d="M50.5 58.5 H53.5" stroke="#000" stroke-width="1"/><path d="M50.5 66.5 H53.5" stroke="#000" stroke-width="1"/><path d="M50.5 75.5 H53.5" stroke="#000" stroke-width="1"/><path d="M50.5 93.5 H53.5" stroke="#000" stroke-width="1"/><path d="M50.5 101.5 H53.5" stroke="#000" stroke-width="1"/><path d="M50.5 110.5 H53.5" stroke="#000" stroke-width="1"/><path d="M50.5 119.5 H53.5" stroke="#000" stroke-width="1"/><path d="M50.5 137.5 H53.5" stroke="#000" stroke-width="1"/><path d="M50.5 145.5 H53.5" stroke="#000" stroke-width="1"/><path d="M50.5 154.5 H53.5" stroke="#000" stroke-width="1"/><path d="M50.5 163.5 H53.5" stroke="#000" stroke-width="1"/><path d="M50.5 173 L53.5 169 L56.5 173 Z" fill="#000"/><path d="M494 32 L499 34.5 L494 37" stroke="#000" fill="none" stroke-width="1"/></svg>
<div class="t" style="left:7.5px;top:100px;font-size:11.5px;font-weight:bold;transform:rotate(-90deg);color:#111">y</div>
</div>
<div style="position:absolute;left:547px;top:197px;width:494px;height:182px;overflow:hidden;">
<div style="position:absolute;left:0;top:0;width:600px;height:1px;background:#000"></div>
<div style="position:absolute;left:0;top:0;width:1px;height:174px;background:#000"></div>
<div style="position:absolute;left:0;top:173px;width:600px;height:1px;background:#000"></div>
<svg style="position:absolute;left:59px;top:41px" width="440" height="132"><rect width="440" height="132" fill="#8a8a8a"/><rect width="440" height="132" filter="url(#fw)"/><g mask="url(#rm1)"><rect width="440" height="132" filter="url(#fm)"/></g><g mask="url(#rs1)"><rect width="440" height="132" filter="url(#fs)"/></g><g mask="url(#rs1)"><rect width="440" height="132" filter="url(#sp)" opacity="0.85"/></g><g mask="url(#rm1)"><rect width="440" height="132" filter="url(#sp)" opacity="0.3"/></g><g mask="url(#rf)"><rect width="440" height="132" filter="url(#sp)" opacity="0.6"/></g><path d="M10.6 12 L13.6 125" stroke="#1a1a1a" stroke-width="1.58" opacity="0.31" stroke-linecap="round" filter="url(#fb)"/><path d="M9 12 L12 125" stroke="#ffffff" stroke-width="1.98" opacity="0.39" stroke-linecap="round" filter="url(#fb)"/><path d="M180.3 3 L182.3 41" stroke="#1a1a1a" stroke-width="2.29" opacity="0.45" stroke-linecap="round" filter="url(#fb)"/><path d="M178 3 L180 41" stroke="#ffffff" stroke-width="2.86" opacity="0.56" stroke-linecap="round" filter="url(#fb)"/><path d="M202.9 5 L203.9 38" stroke="#1a1a1a" stroke-width="1.94" opacity="0.40" stroke-linecap="round" filter="url(#fb)"/><path d="M201 5 L202 38" stroke="#ffffff" stroke-width="2.42" opacity="0.50" stroke-linecap="round" filter="url(#fb)"/><path d="M182.6 41 L202.6 39" stroke="#1a1a1a" stroke-width="1.58" opacity="0.31" stroke-linecap="round" filter="url(#fb)"/><path d="M181 41 L201 39" stroke="#ffffff" stroke-width="1.98" opacity="0.39" stroke-linecap="round" filter="url(#fb)"/><path d="M185.2 3 L201.2 4" stroke="#1a1a1a" stroke-width="1.23" opacity="0.18" stroke-linecap="round" filter="url(#fb)"/><path d="M184 3 L200 4" stroke="#ffffff" stroke-width="1.54" opacity="0.22" stroke-linecap="round" filter="url(#fb)"/><path d="M183.8 44 L186.8 92" stroke="#1a1a1a" stroke-width="1.76" opacity="0.29" stroke-linecap="round" filter="url(#fb)"/><path d="M182 44 L185 92" stroke="#ffffff" stroke-width="2.20" opacity="0.36" stroke-linecap="round" filter="url(#fb)"/><path d="M245.5 30 L250.5 78" stroke="#1a1a1a" stroke-width="2.46" opacity="0.36" stroke-linecap="round" filter="url(#fb)"/><path d="M243 30 L248 78" stroke="#ffffff" stroke-width="3.08" opacity="0.45" stroke-linecap="round" filter="url(#fb)"/><ellipse cx="248" cy="61" rx="4.5" ry="8" fill="#f0f0f0" opacity="0.42" filter="url(#fb)"/><path d="M237.4 18 L241.4 40" stroke="#1a1a1a" stroke-width="1.41" opacity="0.27" stroke-linecap="round" filter="url(#fb)"/><path d="M236 18 L240 40" stroke="#ffffff" stroke-width="1.76" opacity="0.34" stroke-linecap="round" filter="url(#fb)"/><path d="M312.1 20 L310.1 66" stroke="#1a1a1a" stroke-width="2.11" opacity="0.40" stroke-linecap="round" filter="url(#fb)"/><path d="M310 20 L308 66" stroke="#ffffff" stroke-width="2.64" opacity="0.50" stroke-linecap="round" filter="url(#fb)"/><path d="M271.4 62 L307.4 66" stroke="#1a1a1a" stroke-width="1.41" opacity="0.25" stroke-linecap="round" filter="url(#fb)"/><path d="M270 62 L306 66" stroke="#ffffff" stroke-width="1.76" opacity="0.31" stroke-linecap="round" filter="url(#fb)"/><path d="M273.2 22 L275.2 60" stroke="#1a1a1a" stroke-width="1.23" opacity="0.20" stroke-linecap="round" filter="url(#fb)"/><path d="M272 22 L274 60" stroke="#ffffff" stroke-width="1.54" opacity="0.25" stroke-linecap="round" filter="url(#fb)"/><path d="M379.4 8 L381.4 48" stroke="#1a1a1a" stroke-width="1.41" opacity="0.25" stroke-linecap="round" filter="url(#fb)"/><path d="M378 8 L380 48" stroke="#ffffff" stroke-width="1.76" opacity="0.31" stroke-linecap="round" filter="url(#fb)"/><path d="M399.4 10 L398.4 55" stroke="#1a1a1a" stroke-width="1.41" opacity="0.25" stroke-linecap="round" filter="url(#fb)"/><path d="M398 10 L397 55" stroke="#ffffff" stroke-width="1.76" opacity="0.31" stroke-linecap="round" filter="url(#fb)"/><path d="M421.2 30 L423.2 70" stroke="#1a1a1a" stroke-width="1.23" opacity="0.20" stroke-linecap="round" filter="url(#fb)"/><path d="M420 30 L422 70" stroke="#ffffff" stroke-width="1.54" opacity="0.25" stroke-linecap="round" filter="url(#fb)"/><path d="M180 76 H440" stroke="#fff" stroke-width="1" opacity="0.17"/></svg>
<div class="t" style="left:2px;top:7.9px;font-size:9.0px;font-weight:bold;transform:scaleY(1.16);color:#111">t: 47.607</div>
<div class="t" style="left:276.5px;top:3px;font-size:9.5px;font-weight:bold;color:#111">x</div>
<div class="t" style="left:55.40px;top:20.2px;font-size:11px;font-weight:bold;transform:scaleY(1.1);color:#111">300</div>
<div class="t" style="left:99.00px;top:20.2px;font-size:11px;font-weight:bold;transform:scaleY(1.1);color:#111">320</div>
<div class="t" style="left:142.60px;top:20.2px;font-size:11px;font-weight:bold;transform:scaleY(1.1);color:#111">340</div>
<div class="t" style="left:186.20px;top:20.2px;font-size:11px;font-weight:bold;transform:scaleY(1.1);color:#111">360</div>
<div class="t" style="left:229.80px;top:20.2px;font-size:11px;font-weight:bold;transform:scaleY(1.1);color:#111">380</div>
<div class="t" style="left:273.40px;top:20.2px;font-size:11px;font-weight:bold;transform:scaleY(1.1);color:#111">400</div>
<div class="t" style="left:317.00px;top:20.2px;font-size:11px;font-weight:bold;transform:scaleY(1.1);color:#111">420</div>
<div class="t" style="left:360.60px;top:20.2px;font-size:11px;font-weight:bold;transform:scaleY(1.1);color:#111">440</div>
<div class="t" style="left:404.20px;top:20.2px;font-size:11px;font-weight:bold;transform:scaleY(1.1);color:#111">460</div>
<div class="t" style="left:447.80px;top:20.2px;font-size:11px;font-weight:bold;transform:scaleY(1.1);color:#111">480</div>
<div class="t" style="left:480.00px;top:20.2px;font-size:11px;font-weight:bold;transform:scaleY(1.1);color:#111">500</div>
<div class="t" style="left:27.60px;top:36.50px;font-size:11px;font-weight:bold;transform:scaleY(1.1);color:#111">240</div>
<div class="t" style="left:27.60px;top:80.40px;font-size:11px;font-weight:bold;transform:scaleY(1.1);color:#111">260</div>
<div class="t" style="left:27.60px;top:124.30px;font-size:11px;font-weight:bold;transform:scaleY(1.1);color:#111">280</div>
<div class="t" style="left:27.60px;top:164.40px;font-size:11px;font-weight:bold;transform:scaleY(1.1);color:#111">300</div>
<svg style="position:absolute;left:0;top:0" width="600" height="182"><path d="M59 34.5 H499" stroke="#000" stroke-width="1"/><path d="M53.5 41 V173" stroke="#000" stroke-width="1.1"/><path d="M65.5 31.5 V37" stroke="#000" stroke-width="1.1"/><path d="M108.5 31.5 V37" stroke="#000" stroke-width="1.1"/><path d="M152.5 31.5 V37" stroke="#000" stroke-width="1.1"/><path d="M195.5 31.5 V37" stroke="#000" stroke-width="1.1"/><path d="M239.5 31.5 V37" stroke="#000" stroke-width="1.1"/><path d="M283.5 31.5 V37" stroke="#000" stroke-width="1.1"/><path d="M326.5 31.5 V37" stroke="#000" stroke-width="1.1"/><path d="M370.5 31.5 V37" stroke="#000" stroke-width="1.1"/><path d="M413.5 31.5 V37" stroke="#000" stroke-width="1.1"/><path d="M457.5 31.5 V37" stroke="#000" stroke-width="1.1"/><path d="M501.5 31.5 V37" stroke="#000" stroke-width="1.1"/><path d="M73.5 32.5 V34.5" stroke="#000" stroke-width="1"/><path d="M82.5 32.5 V34.5" stroke="#000" stroke-width="1"/><path d="M91.5 32.5 V34.5" stroke="#000" stroke-width="1"/><path d="M99.5 32.5 V34.5" stroke="#000" stroke-width="1"/><path d="M117.5 32.5 V34.5" stroke="#000" stroke-width="1"/><path d="M126.5 32.5 V34.5" stroke="#000" stroke-width="1"/><path d="M134.5 32.5 V34.5" stroke="#000" stroke-width="1"/><path d="M143.5 32.5 V34.5" stroke="#000" stroke-width="1"/><path d="M161.5 32.5 V34.5" stroke="#000" stroke-width="1"/><path d="M169.5 32.5 V34.5" stroke="#000" stroke-width="1"/><path d="M178.5 32.5 V34.5" stroke="#000" stroke-width="1"/><path d="M187.5 32.5 V34.5" stroke="#000" stroke-width="1"/><path d="M204.5 32.5 V34.5" stroke="#000" stroke-width="1"/><path d="M213.5 32.5 V34.5" stroke="#000" stroke-width="1"/><path d="M222.5 32.5 V34.5" stroke="#000" stroke-width="1"/><path d="M230.5 32.5 V34.5" stroke="#000" stroke-width="1"/><path d="M248.5 32.5 V34.5" stroke="#000" stroke-width="1"/><path d="M256.5 32.5 V34.5" stroke="#000" stroke-width="1"/><path d="M265.5 32.5 V34.5" stroke="#000" stroke-width="1"/><path d="M274.5 32.5 V34.5" stroke="#000" stroke-width="1"/><path d="M291.5 32.5 V34.5" stroke="#000" stroke-width="1"/><path d="M300.5 32.5 V34.5" stroke="#000" stroke-width="1"/><path d="M309.5 32.5 V34.5" stroke="#000" stroke-width="1"/><path d="M317.5 32.5 V34.5" stroke="#000" stroke-width="1"/><path d="M335.5 32.5 V34.5" stroke="#000" stroke-width="1"/><path d="M344.5 32.5 V34.5" stroke="#000" stroke-width="1"/><path d="M352.5 32.5 V34.5" stroke="#000" stroke-width="1"/><path d="M361.5 32.5 V34.5" stroke="#000" stroke-width="1"/><path d="M379.5 32.5 V34.5" stroke="#000" stroke-width="1"/><path d="M387.5 32.5 V34.5" stroke="#000" stroke-width="1"/><path d="M396.5 32.5 V34.5" stroke="#000" stroke-width="1"/><path d="M405.5 32.5 V34.5" stroke="#000" stroke-width="1"/><path d="M422.5 32.5 V34.5" stroke="#000" stroke-width="1"/><path d="M431.5 32.5 V34.5" stroke="#000" stroke-width="1"/><path d="M440.5 32.5 V34.5" stroke="#000" stroke-width="1"/><path d="M448.5 32.5 V34.5" stroke="#000" stroke-width="1"/><path d="M466.5 32.5 V34.5" stroke="#000" stroke-width="1"/><path d="M474.5 32.5 V34.5" stroke="#000" stroke-width="1"/><path d="M483.5 32.5 V34.5" stroke="#000" stroke-width="1"/><path d="M492.5 32.5 V34.5" stroke="#000" stroke-width="1"/><path d="M48 40.5 H54" stroke="#000" stroke-width="1.1"/><path d="M48 84.5 H54" stroke="#000" stroke-width="1.1"/><path d="M48 128.5 H54" stroke="#000" stroke-width="1.1"/><path d="M48 172.5 H54" stroke="#000" stroke-width="1.1"/><path d="M50.5 49.5 H53.5" stroke="#000" stroke-width="1"/><path d="M50.5 58.5 H53.5" stroke="#000" stroke-width="1"/><path d="M50.5 66.5 H53.5" stroke="#000" stroke-width="1"/><path d="M50.5 75.5 H53.5" stroke="#000" stroke-width="1"/><path d="M50.5 93.5 H53.5" stroke="#000" stroke-width="1"/><path d="M50.5 101.5 H53.5" stroke="#000" stroke-width="1"/><path d="M50.5 110.5 H53.5" stroke="#000" stroke-width="1"/><path d="M50.5 119.5 H53.5" stroke="#000" stroke-width="1"/><path d="M50.5 137.5 H53.5" stroke="#000" stroke-width="1"/><path d="M50.5 145.5 H53.5" stroke="#000" stroke-width="1"/><path d="M50.5 154.5 H53.5" stroke="#000" stroke-width="1"/><path d="M50.5 163.5 H53.5" stroke="#000" stroke-width="1"/><path d="M50.5 173 L53.5 169 L56.5 173 Z" fill="#000"/><path d="M494 32 L499 34.5 L494 37" stroke="#000" fill="none" stroke-width="1"/></svg>
<div class="t" style="left:7.5px;top:100px;font-size:11.5px;font-weight:bold;transform:rotate(-90deg);color:#111">y</div>
</div>
<div style="position:absolute;left:48px;top:378px;width:499px;height:182px;overflow:hidden;">
<div style="position:absolute;left:0;top:0;width:600px;height:1px;background:#000"></div>
<div style="position:absolute;left:0;top:0;width:1px;height:174px;background:#000"></div>
<div style="position:absolute;left:0;top:174px;width:600px;height:1px;background:#000"></div>
<svg style="position:absolute;left:59px;top:41px" width="440" height="132"><rect width="440" height="132" fill="#8a8a8a"/><rect width="440" height="132" filter="url(#fw)"/><g mask="url(#rm0)"><rect width="440" height="132" filter="url(#fm)"/></g><g mask="url(#rs0)"><rect width="440" height="132" filter="url(#fs)"/></g><g mask="url(#rs0)"><rect width="440" height="132" filter="url(#sp)" opacity="0.85"/></g><g mask="url(#rm0)"><rect width="440" height="132" filter="url(#sp)" opacity="0.3"/></g><g mask="url(#rf)"><rect width="440" height="132" filter="url(#sp)" opacity="0.6"/></g><path d="M10.6 12 L13.6 125" stroke="#1a1a1a" stroke-width="1.58" opacity="0.40" stroke-linecap="round" filter="url(#fb)"/><path d="M9 12 L12 125" stroke="#ffffff" stroke-width="1.98" opacity="0.50" stroke-linecap="round" filter="url(#fb)"/><path d="M180.3 3 L182.3 41" stroke="#1a1a1a" stroke-width="2.29" opacity="0.58" stroke-linecap="round" filter="url(#fb)"/><path d="M178 3 L180 41" stroke="#ffffff" stroke-width="2.86" opacity="0.72" stroke-linecap="round" filter="url(#fb)"/><path d="M202.9 5 L203.9 38" stroke="#1a1a1a" stroke-width="1.94" opacity="0.52" stroke-linecap="round" filter="url(#fb)"/><path d="M201 5 L202 38" stroke="#ffffff" stroke-width="2.42" opacity="0.65" stroke-linecap="round" filter="url(#fb)"/><path d="M182.6 41 L202.6 39" stroke="#1a1a1a" stroke-width="1.58" opacity="0.40" stroke-linecap="round" filter="url(#fb)"/><path d="M181 41 L201 39" stroke="#ffffff" stroke-width="1.98" opacity="0.50" stroke-linecap="round" filter="url(#fb)"/><path d="M185.2 3 L201.2 4" stroke="#1a1a1a" stroke-width="1.23" opacity="0.23" stroke-linecap="round" filter="url(#fb)"/><path d="M184 3 L200 4" stroke="#ffffff" stroke-width="1.54" opacity="0.29" stroke-linecap="round" filter="url(#fb)"/><path d="M183.8 44 L186.8 92" stroke="#1a1a1a" stroke-width="1.76" opacity="0.37" stroke-linecap="round" filter="url(#fb)"/><path d="M182 44 L185 92" stroke="#ffffff" stroke-width="2.20" opacity="0.47" stroke-linecap="round" filter="url(#fb)"/><path d="M245.5 30 L250.5 78" stroke="#1a1a1a" stroke-width="2.46" opacity="0.46" stroke-linecap="round" filter="url(#fb)"/><path d="M243 30 L248 78" stroke="#ffffff" stroke-width="3.08" opacity="0.58" stroke-linecap="round" filter="url(#fb)"/><ellipse cx="248" cy="61" rx="4.5" ry="8" fill="#f0f0f0" opacity="0.54" filter="url(#fb)"/><path d="M237.4 18 L241.4 40" stroke="#1a1a1a" stroke-width="1.41" opacity="0.35" stroke-linecap="round" filter="url(#fb)"/><path d="M236 18 L240 40" stroke="#ffffff" stroke-width="1.76" opacity="0.43" stroke-linecap="round" filter="url(#fb)"/><path d="M312.1 20 L310.1 66" stroke="#1a1a1a" stroke-width="2.11" opacity="0.52" stroke-linecap="round" filter="url(#fb)"/><path d="M310 20 L308 66" stroke="#ffffff" stroke-width="2.64" opacity="0.65" stroke-linecap="round" filter="url(#fb)"/><path d="M271.4 62 L307.4 66" stroke="#1a1a1a" stroke-width="1.41" opacity="0.32" stroke-linecap="round" filter="url(#fb)"/><path d="M270 62 L306 66" stroke="#ffffff" stroke-width="1.76" opacity="0.40" stroke-linecap="round" filter="url(#fb)"/><path d="M273.2 22 L275.2 60" stroke="#1a1a1a" stroke-width="1.23" opacity="0.26" stroke-linecap="round" filter="url(#fb)"/><path d="M272 22 L274 60" stroke="#ffffff" stroke-width="1.54" opacity="0.32" stroke-linecap="round" filter="url(#fb)"/><path d="M379.4 8 L381.4 48" stroke="#1a1a1a" stroke-width="1.41" opacity="0.32" stroke-linecap="round" filter="url(#fb)"/><path d="M378 8 L380 48" stroke="#ffffff" stroke-width="1.76" opacity="0.40" stroke-linecap="round" filter="url(#fb)"/><path d="M399.4 10 L398.4 55" stroke="#1a1a1a" stroke-width="1.41" opacity="0.32" stroke-linecap="round" filter="url(#fb)"/><path d="M398 10 L397 55" stroke="#ffffff" stroke-width="1.76" opacity="0.40" stroke-linecap="round" filter="url(#fb)"/><path d="M421.2 30 L423.2 70" stroke="#1a1a1a" stroke-width="1.23" opacity="0.26" stroke-linecap="round" filter="url(#fb)"/><path d="M420 30 L422 70" stroke="#ffffff" stroke-width="1.54" opacity="0.32" stroke-linecap="round" filter="url(#fb)"/><path d="M180 76 H440" stroke="#fff" stroke-width="1" opacity="0.23"/></svg>
<div class="t" style="left:2px;top:7.9px;font-size:9.0px;font-weight:bold;transform:scaleY(1.16);color:#111">t: 43.701</div>
<div class="t" style="left:276.5px;top:3px;font-size:9.5px;font-weight:bold;color:#111">x</div>
<div class="t" style="left:55.40px;top:20.2px;font-size:11px;font-weight:bold;transform:scaleY(1.1);color:#111">300</div>
<div class="t" style="left:99.00px;top:20.2px;font-size:11px;font-weight:bold;transform:scaleY(1.1);color:#111">320</div>
<div class="t" style="left:142.60px;top:20.2px;font-size:11px;font-weight:bold;transform:scaleY(1.1);color:#111">340</div>
<div class="t" style="left:186.20px;top:20.2px;font-size:11px;font-weight:bold;transform:scaleY(1.1);color:#111">360</div>
<div class="t" style="left:229.80px;top:20.2px;font-size:11px;font-weight:bold;transform:scaleY(1.1);color:#111">380</div>
<div class="t" style="left:273.40px;top:20.2px;font-size:11px;font-weight:bold;transform:scaleY(1.1);color:#111">400</div>
<div class="t" style="left:317.00px;top:20.2px;font-size:11px;font-weight:bold;transform:scaleY(1.1);color:#111">420</div>
<div class="t" style="left:360.60px;top:20.2px;font-size:11px;font-weight:bold;transform:scaleY(1.1);color:#111">440</div>
<div class="t" style="left:404.20px;top:20.2px;font-size:11px;font-weight:bold;transform:scaleY(1.1);color:#111">460</div>
<div class="t" style="left:447.80px;top:20.2px;font-size:11px;font-weight:bold;transform:scaleY(1.1);color:#111">480</div>
<div class="t" style="left:480.00px;top:20.2px;font-size:11px;font-weight:bold;transform:scaleY(1.1);color:#111">500</div>
<div class="t" style="left:27.60px;top:36.50px;font-size:11px;font-weight:bold;transform:scaleY(1.1);color:#111">240</div>
<div class="t" style="left:27.60px;top:80.40px;font-size:11px;font-weight:bold;transform:scaleY(1.1);color:#111">260</div>
<div class="t" style="left:27.60px;top:124.30px;font-size:11px;font-weight:bold;transform:scaleY(1.1);color:#111">280</div>
<div class="t" style="left:27.60px;top:164.40px;font-size:11px;font-weight:bold;transform:scaleY(1.1);color:#111">300</div>
<svg style="position:absolute;left:0;top:0" width="600" height="182"><path d="M59 34.5 H499" stroke="#000" stroke-width="1"/><path d="M53.5 41 V173" stroke="#000" stroke-width="1.1"/><path d="M65.5 31.5 V37" stroke="#000" stroke-width="1.1"/><path d="M108.5 31.5 V37" stroke="#000" stroke-width="1.1"/><path d="M152.5 31.5 V37" stroke="#000" stroke-width="1.1"/><path d="M195.5 31.5 V37" stroke="#000" stroke-width="1.1"/><path d="M239.5 31.5 V37" stroke="#000" stroke-width="1.1"/><path d="M283.5 31.5 V37" stroke="#000" stroke-width="1.1"/><path d="M326.5 31.5 V37" stroke="#000" stroke-width="1.1"/><path d="M370.5 31.5 V37" stroke="#000" stroke-width="1.1"/><path d="M413.5 31.5 V37" stroke="#000" stroke-width="1.1"/><path d="M457.5 31.5 V37" stroke="#000" stroke-width="1.1"/><path d="M501.5 31.5 V37" stroke="#000" stroke-width="1.1"/><path d="M73.5 32.5 V34.5" stroke="#000" stroke-width="1"/><path d="M82.5 32.5 V34.5" stroke="#000" stroke-width="1"/><path d="M91.5 32.5 V34.5" stroke="#000" stroke-width="1"/><path d="M99.5 32.5 V34.5" stroke="#000" stroke-width="1"/><path d="M117.5 32.5 V34.5" stroke="#000" stroke-width="1"/><path d="M126.5 32.5 V34.5" stroke="#000" stroke-width="1"/><path d="M134.5 32.5 V34.5" stroke="#000" stroke-width="1"/><path d="M143.5 32.5 V34.5" stroke="#000" stroke-width="1"/><path d="M161.5 32.5 V34.5" stroke="#000" stroke-width="1"/><path d="M169.5 32.5 V34.5" stroke="#000" stroke-width="1"/><path d="M178.5 32.5 V34.5" stroke="#000" stroke-width="1"/><path d="M187.5 32.5 V34.5" stroke="#000" stroke-width="1"/><path d="M204.5 32.5 V34.5" stroke="#000" stroke-width="1"/><path d="M213.5 32.5 V34.5" stroke="#000" stroke-width="1"/><path d="M222.5 32.5 V34.5" stroke="#000" stroke-width="1"/><path d="M230.5 32.5 V34.5" stroke="#000" stroke-width="1"/><path d="M248.5 32.5 V34.5" stroke="#000" stroke-width="1"/><path d="M256.5 32.5 V34.5" stroke="#000" stroke-width="1"/><path d="M265.5 32.5 V34.5" stroke="#000" stroke-width="1"/><path d="M274.5 32.5 V34.5" stroke="#000" stroke-width="1"/><path d="M291.5 32.5 V34.5" stroke="#000" stroke-width="1"/><path d="M300.5 32.5 V34.5" stroke="#000" stroke-width="1"/><path d="M309.5 32.5 V34.5" stroke="#000" stroke-width="1"/><path d="M317.5 32.5 V34.5" stroke="#000" stroke-width="1"/><path d="M335.5 32.5 V34.5" stroke="#000" stroke-width="1"/><path d="M344.5 32.5 V34.5" stroke="#000" stroke-width="1"/><path d="M352.5 32.5 V34.5" stroke="#000" stroke-width="1"/><path d="M361.5 32.5 V34.5" stroke="#000" stroke-width="1"/><path d="M379.5 32.5 V34.5" stroke="#000" stroke-width="1"/><path d="M387.5 32.5 V34.5" stroke="#000" stroke-width="1"/><path d="M396.5 32.5 V34.5" stroke="#000" stroke-width="1"/><path d="M405.5 32.5 V34.5" stroke="#000" stroke-width="1"/><path d="M422.5 32.5 V34.5" stroke="#000" stroke-width="1"/><path d="M431.5 32.5 V34.5" stroke="#000" stroke-width="1"/><path d="M440.5 32.5 V34.5" stroke="#000" stroke-width="1"/><path d="M448.5 32.5 V34.5" stroke="#000" stroke-width="1"/><path d="M466.5 32.5 V34.5" stroke="#000" stroke-width="1"/><path d="M474.5 32.5 V34.5" stroke="#000" stroke-width="1"/><path d="M483.5 32.5 V34.5" stroke="#000" stroke-width="1"/><path d="M492.5 32.5 V34.5" stroke="#000" stroke-width="1"/><path d="M48 40.5 H54" stroke="#000" stroke-width="1.1"/><path d="M48 84.5 H54" stroke="#000" stroke-width="1.1"/><path d="M48 128.5 H54" stroke="#000" stroke-width="1.1"/><path d="M48 172.5 H54" stroke="#000" stroke-width="1.1"/><path d="M50.5 49.5 H53.5" stroke="#000" stroke-width="1"/><path d="M50.5 58.5 H53.5" stroke="#000" stroke-width="1"/><path d="M50.5 66.5 H53.5" stroke="#000" stroke-width="1"/><path d="M50.5 75.5 H53.5" stroke="#000" stroke-width="1"/><path d="M50.5 93.5 H53.5" stroke="#000" stroke-width="1"/><path d="M50.5 101.5 H53.5" stroke="#000" stroke-width="1"/><path d="M50.5 110.5 H53.5" stroke="#000" stroke-width="1"/><path d="M50.5 119.5 H53.5" stroke="#000" stroke-width="1"/><path d="M50.5 137.5 H53.5" stroke="#000" stroke-width="1"/><path d="M50.5 145.5 H53.5" stroke="#000" stroke-width="1"/><path d="M50.5 154.5 H53.5" stroke="#000" stroke-width="1"/><path d="M50.5 163.5 H53.5" stroke="#000" stroke-width="1"/><path d="M50.5 173 L53.5 169 L56.5 173 Z" fill="#000"/><path d="M494 32 L499 34.5 L494 37" stroke="#000" fill="none" stroke-width="1"/></svg>
<div class="t" style="left:7.5px;top:100px;font-size:11.5px;font-weight:bold;transform:rotate(-90deg);color:#111">y</div>
</div>
<div style="position:absolute;left:547px;top:378px;width:494px;height:182px;overflow:hidden;">
<div style="position:absolute;left:0;top:0;width:600px;height:1px;background:#000"></div>
<div style="position:absolute;left:0;top:0;width:1px;height:174px;background:#000"></div>
<div style="position:absolute;left:0;top:174px;width:600px;height:1px;background:#000"></div>
<svg style="position:absolute;left:59px;top:41px" width="440" height="132"><rect width="440" height="132" fill="#8a8a8a"/><rect width="440" height="132" filter="url(#fw)"/><g mask="url(#rm1)"><rect width="440" height="132" filter="url(#fm)"/></g><g mask="url(#rs1)"><rect width="440" height="132" filter="url(#fs)"/></g><g mask="url(#rs1)"><rect width="440" height="132" filter="url(#sp)" opacity="0.85"/></g><g mask="url(#rm1)"><rect width="440" height="132" filter="url(#sp)" opacity="0.3"/></g><g mask="url(#rf)"><rect width="440" height="132" filter="url(#sp)" opacity="0.6"/></g><path d="M10.6 12 L13.6 125" stroke="#1a1a1a" stroke-width="1.58" opacity="0.29" stroke-linecap="round" filter="url(#fb)"/><path d="M9 12 L12 125" stroke="#ffffff" stroke-width="1.98" opacity="0.36" stroke-linecap="round" filter="url(#fb)"/><path d="M180.3 3 L182.3 41" stroke="#1a1a1a" stroke-width="2.29" opacity="0.42" stroke-linecap="round" filter="url(#fb)"/><path d="M178 3 L180 41" stroke="#ffffff" stroke-width="2.86" opacity="0.52" stroke-linecap="round" filter="url(#fb)"/><path d="M202.9 5 L203.9 38" stroke="#1a1a1a" stroke-width="1.94" opacity="0.37" stroke-linecap="round" filter="url(#fb)"/><path d="M201 5 L202 38" stroke="#ffffff" stroke-width="2.42" opacity="0.47" stroke-linecap="round" filter="url(#fb)"/><path d="M182.6 41 L202.6 39" stroke="#1a1a1a" stroke-width="1.58" opacity="0.29" stroke-linecap="round" filter="url(#fb)"/><path d="M181 41 L201 39" stroke="#ffffff" stroke-width="1.98" opacity="0.36" stroke-linecap="round" filter="url(#fb)"/><path d="M185.2 3 L201.2 4" stroke="#1a1a1a" stroke-width="1.23" opacity="0.17" stroke-linecap="round" filter="url(#fb)"/><path d="M184 3 L200 4" stroke="#ffffff" stroke-width="1.54" opacity="0.21" stroke-linecap="round" filter="url(#fb)"/><path d="M183.8 44 L186.8 92" stroke="#1a1a1a" stroke-width="1.76" opacity="0.27" stroke-linecap="round" filter="url(#fb)"/><path d="M182 44 L185 92" stroke="#ffffff" stroke-width="2.20" opacity="0.34" stroke-linecap="round" filter="url(#fb)"/><path d="M245.5 30 L250.5 78" stroke="#1a1a1a" stroke-width="2.46" opacity="0.33" stroke-linecap="round" filter="url(#fb)"/><path d="M243 30 L248 78" stroke="#ffffff" stroke-width="3.08" opacity="0.42" stroke-linecap="round" filter="url(#fb)"/><ellipse cx="248" cy="61" rx="4.5" ry="8" fill="#f0f0f0" opacity="0.39" filter="url(#fb)"/><path d="M237.4 18 L241.4 40" stroke="#1a1a1a" stroke-width="1.41" opacity="0.25" stroke-linecap="round" filter="url(#fb)"/><path d="M236 18 L240 40" stroke="#ffffff" stroke-width="1.76" opacity="0.31" stroke-linecap="round" filter="url(#fb)"/><path d="M312.1 20 L310.1 66" stroke="#1a1a1a" stroke-width="2.11" opacity="0.37" stroke-linecap="round" filter="url(#fb)"/><path d="M310 20 L308 66" stroke="#ffffff" stroke-width="2.64" opacity="0.47" stroke-linecap="round" filter="url(#fb)"/><path d="M271.4 62 L307.4 66" stroke="#1a1a1a" stroke-width="1.41" opacity="0.23" stroke-linecap="round" filter="url(#fb)"/><path d="M270 62 L306 66" stroke="#ffffff" stroke-width="1.76" opacity="0.29" stroke-linecap="round" filter="url(#fb)"/><path d="M273.2 22 L275.2 60" stroke="#1a1a1a" stroke-width="1.23" opacity="0.19" stroke-linecap="round" filter="url(#fb)"/><path d="M272 22 L274 60" stroke="#ffffff" stroke-width="1.54" opacity="0.23" stroke-linecap="round" filter="url(#fb)"/><path d="M379.4 8 L381.4 48" stroke="#1a1a1a" stroke-width="1.41" opacity="0.23" stroke-linecap="round" filter="url(#fb)"/><path d="M378 8 L380 48" stroke="#ffffff" stroke-width="1.76" opacity="0.29" stroke-linecap="round" filter="url(#fb)"/><path d="M399.4 10 L398.4 55" stroke="#1a1a1a" stroke-width="1.41" opacity="0.23" stroke-linecap="round" filter="url(#fb)"/><path d="M398 10 L397 55" stroke="#ffffff" stroke-width="1.76" opacity="0.29" stroke-linecap="round" filter="url(#fb)"/><path d="M421.2 30 L423.2 70" stroke="#1a1a1a" stroke-width="1.23" opacity="0.19" stroke-linecap="round" filter="url(#fb)"/><path d="M420 30 L422 70" stroke="#ffffff" stroke-width="1.54" opacity="0.23" stroke-linecap="round" filter="url(#fb)"/><path d="M180 76 H440" stroke="#fff" stroke-width="1" opacity="0.16"/></svg>
<div class="t" style="left:2px;top:7.9px;font-size:9.0px;font-weight:bold;transform:scaleY(1.16);color:#111">t: 49.561</div>
<div class="t" style="left:276.5px;top:3px;font-size:9.5px;font-weight:bold;color:#111">x</div>
<div class="t" style="left:55.40px;top:20.2px;font-size:11px;font-weight:bold;transform:scaleY(1.1);color:#111">300</div>
<div class="t" style="left:99.00px;top:20.2px;font-size:11px;font-weight:bold;transform:scaleY(1.1);color:#111">320</div>
<div class="t" style="left:142.60px;top:20.2px;font-size:11px;font-weight:bold;transform:scaleY(1.1);color:#111">340</div>
<div class="t" style="left:186.20px;top:20.2px;font-size:11px;font-weight:bold;transform:scaleY(1.1);color:#111">360</div>
<div class="t" style="left:229.80px;top:20.2px;font-size:11px;font-weight:bold;transform:scaleY(1.1);color:#111">380</div>
<div class="t" style="left:273.40px;top:20.2px;font-size:11px;font-weight:bold;transform:scaleY(1.1);color:#111">400</div>
<div class="t" style="left:317.00px;top:20.2px;font-size:11px;font-weight:bold;transform:scaleY(1.1);color:#111">420</div>
<div class="t" style="left:360.60px;top:20.2px;font-size:11px;font-weight:bold;transform:scaleY(1.1);color:#111">440</div>
<div class="t" style="left:404.20px;top:20.2px;font-size:11px;font-weight:bold;transform:scaleY(1.1);color:#111">460</div>
<div class="t" style="left:447.80px;top:20.2px;font-size:11px;font-weight:bold;transform:scaleY(1.1);color:#111">480</div>
<div class="t" style="left:480.00px;top:20.2px;font-size:11px;font-weight:bold;transform:scaleY(1.1);color:#111">500</div>
<div class="t" style="left:27.60px;top:36.50px;font-size:11px;font-weight:bold;transform:scaleY(1.1);color:#111">240</div>
<div class="t" style="left:27.60px;top:80.40px;font-size:11px;font-weight:bold;transform:scaleY(1.1);color:#111">260</div>
<div class="t" style="left:27.60px;top:124.30px;font-size:11px;font-weight:bold;transform:scaleY(1.1);color:#111">280</div>
<div class="t" style="left:27.60px;top:164.40px;font-size:11px;font-weight:bold;transform:scaleY(1.1);color:#111">300</div>
<svg style="position:absolute;left:0;top:0" width="600" height="182"><path d="M59 34.5 H499" stroke="#000" stroke-width="1"/><path d="M53.5 41 V173" stroke="#000" stroke-width="1.1"/><path d="M65.5 31.5 V37" stroke="#000" stroke-width="1.1"/><path d="M108.5 31.5 V37" stroke="#000" stroke-width="1.1"/><path d="M152.5 31.5 V37" stroke="#000" stroke-width="1.1"/><path d="M195.5 31.5 V37" stroke="#000" stroke-width="1.1"/><path d="M239.5 31.5 V37" stroke="#000" stroke-width="1.1"/><path d="M283.5 31.5 V37" stroke="#000" stroke-width="1.1"/><path d="M326.5 31.5 V37" stroke="#000" stroke-width="1.1"/><path d="M370.5 31.5 V37" stroke="#000" stroke-width="1.1"/><path d="M413.5 31.5 V37" stroke="#000" stroke-width="1.1"/><path d="M457.5 31.5 V37" stroke="#000" stroke-width="1.1"/><path d="M501.5 31.5 V37" stroke="#000" stroke-width="1.1"/><path d="M73.5 32.5 V34.5" stroke="#000" stroke-width="1"/><path d="M82.5 32.5 V34.5" stroke="#000" stroke-width="1"/><path d="M91.5 32.5 V34.5" stroke="#000" stroke-width="1"/><path d="M99.5 32.5 V34.5" stroke="#000" stroke-width="1"/><path d="M117.5 32.5 V34.5" stroke="#000" stroke-width="1"/><path d="M126.5 32.5 V34.5" stroke="#000" stroke-width="1"/><path d="M134.5 32.5 V34.5" stroke="#000" stroke-width="1"/><path d="M143.5 32.5 V34.5" stroke="#000" stroke-width="1"/><path d="M161.5 32.5 V34.5" stroke="#000" stroke-width="1"/><path d="M169.5 32.5 V34.5" stroke="#000" stroke-width="1"/><path d="M178.5 32.5 V34.5" stroke="#000" stroke-width="1"/><path d="M187.5 32.5 V34.5" stroke="#000" stroke-width="1"/><path d="M204.5 32.5 V34.5" stroke="#000" stroke-width="1"/><path d="M213.5 32.5 V34.5" stroke="#000" stroke-width="1"/><path d="M222.5 32.5 V34.5" stroke="#000" stroke-width="1"/><path d="M230.5 32.5 V34.5" stroke="#000" stroke-width="1"/><path d="M248.5 32.5 V34.5" stroke="#000" stroke-width="1"/><path d="M256.5 32.5 V34.5" stroke="#000" stroke-width="1"/><path d="M265.5 32.5 V34.5" stroke="#000" stroke-width="1"/><path d="M274.5 32.5 V34.5" stroke="#000" stroke-width="1"/><path d="M291.5 32.5 V34.5" stroke="#000" stroke-width="1"/><path d="M300.5 32.5 V34.5" stroke="#000" stroke-width="1"/><path d="M309.5 32.5 V34.5" stroke="#000" stroke-width="1"/><path d="M317.5 32.5 V34.5" stroke="#000" stroke-width="1"/><path d="M335.5 32.5 V34.5" stroke="#000" stroke-width="1"/><path d="M344.5 32.5 V34.5" stroke="#000" stroke-width="1"/><path d="M352.5 32.5 V34.5" stroke="#000" stroke-width="1"/><path d="M361.5 32.5 V34.5" stroke="#000" stroke-width="1"/><path d="M379.5 32.5 V34.5" stroke="#000" stroke-width="1"/><path d="M387.5 32.5 V34.5" stroke="#000" stroke-width="1"/><path d="M396.5 32.5 V34.5" stroke="#000" stroke-width="1"/><path d="M405.5 32.5 V34.5" stroke="#000" stroke-width="1"/><path d="M422.5 32.5 V34.5" stroke="#000" stroke-width="1"/><path d="M431.5 32.5 V34.5" stroke="#000" stroke-width="1"/><path d="M440.5 32.5 V34.5" stroke="#000" stroke-width="1"/><path d="M448.5 32.5 V34.5" stroke="#000" stroke-width="1"/><path d="M466.5 32.5 V34.5" stroke="#000" stroke-width="1"/><path d="M474.5 32.5 V34.5" stroke="#000" stroke-width="1"/><path d="M483.5 32.5 V34.5" stroke="#000" stroke-width="1"/><path d="M492.5 32.5 V34.5" stroke="#000" stroke-width="1"/><path d="M48 40.5 H54" stroke="#000" stroke-width="1.1"/><path d="M48 84.5 H54" stroke="#000" stroke-width="1.1"/><path d="M48 128.5 H54" stroke="#000" stroke-width="1.1"/><path d="M48 172.5 H54" stroke="#000" stroke-width="1.1"/><path d="M50.5 49.5 H53.5" stroke="#000" stroke-width="1"/><path d="M50.5 58.5 H53.5" stroke="#000" stroke-width="1"/><path d="M50.5 66.5 H53.5" stroke="#000" stroke-width="1"/><path d="M50.5 75.5 H53.5" stroke="#000" stroke-width="1"/><path d="M50.5 93.5 H53.5" stroke="#000" stroke-width="1"/><path d="M50.5 101.5 H53.5" stroke="#000" stroke-width="1"/><path d="M50.5 110.5 H53.5" stroke="#000" stroke-width="1"/><path d="M50.5 119.5 H53.5" stroke="#000" stroke-width="1"/><path d="M50.5 137.5 H53.5" stroke="#000" stroke-width="1"/><path d="M50.5 145.5 H53.5" stroke="#000" stroke-width="1"/><path d="M50.5 154.5 H53.5" stroke="#000" stroke-width="1"/><path d="M50.5 163.5 H53.5" stroke="#000" stroke-width="1"/><path d="M50.5 173 L53.5 169 L56.5 173 Z" fill="#000"/><path d="M494 32 L499 34.5 L494 37" stroke="#000" fill="none" stroke-width="1"/></svg>
<div class="t" style="left:7.5px;top:100px;font-size:11.5px;font-weight:bold;transform:rotate(-90deg);color:#111">y</div>
</div>
<div style="position:absolute;left:48px;top:560px;width:499px;height:182px;overflow:hidden;">
<div style="position:absolute;left:0;top:0;width:600px;height:1px;background:#000"></div>
<div style="position:absolute;left:0;top:0;width:1px;height:174px;background:#000"></div>
<div style="position:absolute;left:0;top:174px;width:600px;height:1px;background:#000"></div>
<svg style="position:absolute;left:59px;top:41px" width="440" height="132"><rect width="440" height="132" fill="#8a8a8a"/><rect width="440" height="132" filter="url(#fw)"/><g mask="url(#rm0)"><rect width="440" height="132" filter="url(#fm)"/></g><g mask="url(#rs0)"><rect width="440" height="132" filter="url(#fs)"/></g><g mask="url(#rs0)"><rect width="440" height="132" filter="url(#sp)" opacity="0.85"/></g><g mask="url(#rm0)"><rect width="440" height="132" filter="url(#sp)" opacity="0.3"/></g><g mask="url(#rf)"><rect width="440" height="132" filter="url(#sp)" opacity="0.6"/></g><path d="M10.6 12 L13.6 125" stroke="#1a1a1a" stroke-width="1.58" opacity="0.38" stroke-linecap="round" filter="url(#fb)"/><path d="M9 12 L12 125" stroke="#ffffff" stroke-width="1.98" opacity="0.48" stroke-linecap="round" filter="url(#fb)"/><path d="M180.3 3 L182.3 41" stroke="#1a1a1a" stroke-width="2.29" opacity="0.54" stroke-linecap="round" filter="url(#fb)"/><path d="M178 3 L180 41" stroke="#ffffff" stroke-width="2.86" opacity="0.68" stroke-linecap="round" filter="url(#fb)"/><path d="M202.9 5 L203.9 38" stroke="#1a1a1a" stroke-width="1.94" opacity="0.49" stroke-linecap="round" filter="url(#fb)"/><path d="M201 5 L202 38" stroke="#ffffff" stroke-width="2.42" opacity="0.61" stroke-linecap="round" filter="url(#fb)"/><path d="M182.6 41 L202.6 39" stroke="#1a1a1a" stroke-width="1.58" opacity="0.38" stroke-linecap="round" filter="url(#fb)"/><path d="M181 41 L201 39" stroke="#ffffff" stroke-width="1.98" opacity="0.48" stroke-linecap="round" filter="url(#fb)"/><path d="M185.2 3 L201.2 4" stroke="#1a1a1a" stroke-width="1.23" opacity="0.22" stroke-linecap="round" filter="url(#fb)"/><path d="M184 3 L200 4" stroke="#ffffff" stroke-width="1.54" opacity="0.27" stroke-linecap="round" filter="url(#fb)"/><path d="M183.8 44 L186.8 92" stroke="#1a1a1a" stroke-width="1.76" opacity="0.35" stroke-linecap="round" filter="url(#fb)"/><path d="M182 44 L185 92" stroke="#ffffff" stroke-width="2.20" opacity="0.44" stroke-linecap="round" filter="url(#fb)"/><path d="M245.5 30 L250.5 78" stroke="#1a1a1a" stroke-width="2.46" opacity="0.44" stroke-linecap="round" filter="url(#fb)"/><path d="M243 30 L248 78" stroke="#ffffff" stroke-width="3.08" opacity="0.54" stroke-linecap="round" filter="url(#fb)"/><ellipse cx="248" cy="61" rx="4.5" ry="8" fill="#f0f0f0" opacity="0.51" filter="url(#fb)"/><path d="M237.4 18 L241.4 40" stroke="#1a1a1a" stroke-width="1.41" opacity="0.33" stroke-linecap="round" filter="url(#fb)"/><path d="M236 18 L240 40" stroke="#ffffff" stroke-width="1.76" opacity="0.41" stroke-linecap="round" filter="url(#fb)"/><path d="M312.1 20 L310.1 66" stroke="#1a1a1a" stroke-width="2.11" opacity="0.49" stroke-linecap="round" filter="url(#fb)"/><path d="M310 20 L308 66" stroke="#ffffff" stroke-width="2.64" opacity="0.61" stroke-linecap="round" filter="url(#fb)"/><path d="M271.4 62 L307.4 66" stroke="#1a1a1a" stroke-width="1.41" opacity="0.30" stroke-linecap="round" filter="url(#fb)"/><path d="M270 62 L306 66" stroke="#ffffff" stroke-width="1.76" opacity="0.37" stroke-linecap="round" filter="url(#fb)"/><path d="M273.2 22 L275.2 60" stroke="#1a1a1a" stroke-width="1.23" opacity="0.24" stroke-linecap="round" filter="url(#fb)"/><path d="M272 22 L274 60" stroke="#ffffff" stroke-width="1.54" opacity="0.31" stroke-linecap="round" filter="url(#fb)"/><path d="M379.4 8 L381.4 48" stroke="#1a1a1a" stroke-width="1.41" opacity="0.30" stroke-linecap="round" filter="url(#fb)"/><path d="M378 8 L380 48" stroke="#ffffff" stroke-width="1.76" opacity="0.37" stroke-linecap="round" filter="url(#fb)"/><path d="M399.4 10 L398.4 55" stroke="#1a1a1a" stroke-width="1.41" opacity="0.30" stroke-linecap="round" filter="url(#fb)"/><path d="M398 10 L397 55" stroke="#ffffff" stroke-width="1.76" opacity="0.37" stroke-linecap="round" filter="url(#fb)"/><path d="M421.2 30 L423.2 70" stroke="#1a1a1a" stroke-width="1.23" opacity="0.24" stroke-linecap="round" filter="url(#fb)"/><path d="M420 30 L422 70" stroke="#ffffff" stroke-width="1.54" opacity="0.31" stroke-linecap="round" filter="url(#fb)"/><path d="M180 76 H440" stroke="#fff" stroke-width="1" opacity="0.21"/></svg>
<div class="t" style="left:2px;top:7.9px;font-size:9.0px;font-weight:bold;transform:scaleY(1.16);color:#111">t: 45.654</div>
<div class="t" style="left:276.5px;top:3px;font-size:9.5px;font-weight:bold;color:#111">x</div>
<div class="t" style="left:55.40px;top:20.2px;font-size:11px;font-weight:bold;transform:scaleY(1.1);color:#111">300</div>
<div class="t" style="left:99.00px;top:20.2px;font-size:11px;font-weight:bold;transform:scaleY(1.1);color:#111">320</div>
<div class="t" style="left:142.60px;top:20.2px;font-size:11px;font-weight:bold;transform:scaleY(1.1);color:#111">340</div>
<div class="t" style="left:186.20px;top:20.2px;font-size:11px;font-weight:bold;transform:scaleY(1.1);color:#111">360</div>
<div class="t" style="left:229.80px;top:20.2px;font-size:11px;font-weight:bold;transform:scaleY(1.1);color:#111">380</div>
<div class="t" style="left:273.40px;top:20.2px;font-size:11px;font-weight:bold;transform:scaleY(1.1);color:#111">400</div>
<div class="t" style="left:317.00px;top:20.2px;font-size:11px;font-weight:bold;transform:scaleY(1.1);color:#111">420</div>
<div class="t" style="left:360.60px;top:20.2px;font-size:11px;font-weight:bold;transform:scaleY(1.1);color:#111">440</div>
<div class="t" style="left:404.20px;top:20.2px;font-size:11px;font-weight:bold;transform:scaleY(1.1);color:#111">460</div>
<div class="t" style="left:447.80px;top:20.2px;font-size:11px;font-weight:bold;transform:scaleY(1.1);color:#111">480</div>
<div class="t" style="left:480.00px;top:20.2px;font-size:11px;font-weight:bold;transform:scaleY(1.1);color:#111">500</div>
<div class="t" style="left:27.60px;top:36.50px;font-size:11px;font-weight:bold;transform:scaleY(1.1);color:#111">240</div>
<div class="t" style="left:27.60px;top:80.40px;font-size:11px;font-weight:bold;transform:scaleY(1.1);color:#111">260</div>
<div class="t" style="left:27.60px;top:124.30px;font-size:11px;font-weight:bold;transform:scaleY(1.1);color:#111">280</div>
<div class="t" style="left:27.60px;top:164.40px;font-size:11px;font-weight:bold;transform:scaleY(1.1);color:#111">300</div>
<svg style="position:absolute;left:0;top:0" width="600" height="182"><path d="M59 34.5 H499" stroke="#000" stroke-width="1"/><path d="M53.5 41 V173" stroke="#000" stroke-width="1.1"/><path d="M65.5 31.5 V37" stroke="#000" stroke-width="1.1"/><path d="M108.5 31.5 V37" stroke="#000" stroke-width="1.1"/><path d="M152.5 31.5 V37" stroke="#000" stroke-width="1.1"/><path d="M195.5 31.5 V37" stroke="#000" stroke-width="1.1"/><path d="M239.5 31.5 V37" stroke="#000" stroke-width="1.1"/><path d="M283.5 31.5 V37" stroke="#000" stroke-width="1.1"/><path d="M326.5 31.5 V37" stroke="#000" stroke-width="1.1"/><path d="M370.5 31.5 V37" stroke="#000" stroke-width="1.1"/><path d="M413.5 31.5 V37" stroke="#000" stroke-width="1.1"/><path d="M457.5 31.5 V37" stroke="#000" stroke-width="1.1"/><path d="M501.5 31.5 V37" stroke="#000" stroke-width="1.1"/><path d="M73.5 32.5 V34.5" stroke="#000" stroke-width="1"/><path d="M82.5 32.5 V34.5" stroke="#000" stroke-width="1"/><path d="M91.5 32.5 V34.5" stroke="#000" stroke-width="1"/><path d="M99.5 32.5 V34.5" stroke="#000" stroke-width="1"/><path d="M117.5 32.5 V34.5" stroke="#000" stroke-width="1"/><path d="M126.5 32.5 V34.5" stroke="#000" stroke-width="1"/><path d="M134.5 32.5 V34.5" stroke="#000" stroke-width="1"/><path d="M143.5 32.5 V34.5" stroke="#000" stroke-width="1"/><path d="M161.5 32.5 V34.5" stroke="#000" stroke-width="1"/><path d="M169.5 32.5 V34.5" stroke="#000" stroke-width="1"/><path d="M178.5 32.5 V34.5" stroke="#000" stroke-width="1"/><path d="M187.5 32.5 V34.5" stroke="#000" stroke-width="1"/><path d="M204.5 32.5 V34.5" stroke="#000" stroke-width="1"/><path d="M213.5 32.5 V34.5" stroke="#000" stroke-width="1"/><path d="M222.5 32.5 V34.5" stroke="#000" stroke-width="1"/><path d="M230.5 32.5 V34.5" stroke="#000" stroke-width="1"/><path d="M248.5 32.5 V34.5" stroke="#000" stroke-width="1"/><path d="M256.5 32.5 V34.5" stroke="#000" stroke-width="1"/><path d="M265.5 32.5 V34.5" stroke="#000" stroke-width="1"/><path d="M274.5 32.5 V34.5" stroke="#000" stroke-width="1"/><path d="M291.5 32.5 V34.5" stroke="#000" stroke-width="1"/><path d="M300.5 32.5 V34.5" stroke="#000" stroke-width="1"/><path d="M309.5 32.5 V34.5" stroke="#000" stroke-width="1"/><path d="M317.5 32.5 V34.5" stroke="#000" stroke-width="1"/><path d="M335.5 32.5 V34.5" stroke="#000" stroke-width="1"/><path d="M344.5 32.5 V34.5" stroke="#000" stroke-width="1"/><path d="M352.5 32.5 V34.5" stroke="#000" stroke-width="1"/><path d="M361.5 32.5 V34.5" stroke="#000" stroke-width="1"/><path d="M379.5 32.5 V34.5" stroke="#000" stroke-width="1"/><path d="M387.5 32.5 V34.5" stroke="#000" stroke-width="1"/><path d="M396.5 32.5 V34.5" stroke="#000" stroke-width="1"/><path d="M405.5 32.5 V34.5" stroke="#000" stroke-width="1"/><path d="M422.5 32.5 V34.5" stroke="#000" stroke-width="1"/><path d="M431.5 32.5 V34.5" stroke="#000" stroke-width="1"/><path d="M440.5 32.5 V34.5" stroke="#000" stroke-width="1"/><path d="M448.5 32.5 V34.5" stroke="#000" stroke-width="1"/><path d="M466.5 32.5 V34.5" stroke="#000" stroke-width="1"/><path d="M474.5 32.5 V34.5" stroke="#000" stroke-width="1"/><path d="M483.5 32.5 V34.5" stroke="#000" stroke-width="1"/><path d="M492.5 32.5 V34.5" stroke="#000" stroke-width="1"/><path d="M48 40.5 H54" stroke="#000" stroke-width="1.1"/><path d="M48 84.5 H54" stroke="#000" stroke-width="1.1"/><path d="M48 128.5 H54" stroke="#000" stroke-width="1.1"/><path d="M48 172.5 H54" stroke="#000" stroke-width="1.1"/><path d="M50.5 49.5 H53.5" stroke="#000" stroke-width="1"/><path d="M50.5 58.5 H53.5" stroke="#000" stroke-width="1"/><path d="M50.5 66.5 H53.5" stroke="#000" stroke-width="1"/><path d="M50.5 75.5 H53.5" stroke="#000" stroke-width="1"/><path d="M50.5 93.5 H53.5" stroke="#000" stroke-width="1"/><path d="M50.5 101.5 H53.5" stroke="#000" stroke-width="1"/><path d="M50.5 110.5 H53.5" stroke="#000" stroke-width="1"/><path d="M50.5 119.5 H53.5" stroke="#000" stroke-width="1"/><path d="M50.5 137.5 H53.5" stroke="#000" stroke-width="1"/><path d="M50.5 145.5 H53.5" stroke="#000" stroke-width="1"/><path d="M50.5 154.5 H53.5" stroke="#000" stroke-width="1"/><path d="M50.5 163.5 H53.5" stroke="#000" stroke-width="1"/><path d="M50.5 173 L53.5 169 L56.5 173 Z" fill="#000"/><path d="M494 32 L499 34.5 L494 37" stroke="#000" fill="none" stroke-width="1"/></svg>
<div class="t" style="left:7.5px;top:100px;font-size:11.5px;font-weight:bold;transform:rotate(-90deg);color:#111">y</div>
</div>
<div style="position:absolute;left:547px;top:560px;width:494px;height:182px;overflow:hidden;">
<div style="position:absolute;left:0;top:0;width:600px;height:1px;background:#000"></div>
<div style="position:absolute;left:0;top:0;width:1px;height:174px;background:#000"></div>
<div style="position:absolute;left:0;top:174px;width:600px;height:1px;background:#000"></div>
<svg style="position:absolute;left:59px;top:41px" width="440" height="132"><rect width="440" height="132" fill="#8a8a8a"/><rect width="440" height="132" filter="url(#fw)"/><g mask="url(#rm1)"><rect width="440" height="132" filter="url(#fm)"/></g><g mask="url(#rs1)"><rect width="440" height="132" filter="url(#fs)"/></g><g mask="url(#rs1)"><rect width="440" height="132" filter="url(#sp)" opacity="0.85"/></g><g mask="url(#rm1)"><rect width="440" height="132" filter="url(#sp)" opacity="0.3"/></g><g mask="url(#rf)"><rect width="440" height="132" filter="url(#sp)" opacity="0.6"/></g><path d="M10.6 12 L13.6 125" stroke="#1a1a1a" stroke-width="1.58" opacity="0.27" stroke-linecap="round" filter="url(#fb)"/><path d="M9 12 L12 125" stroke="#ffffff" stroke-width="1.98" opacity="0.34" stroke-linecap="round" filter="url(#fb)"/><path d="M180.3 3 L182.3 41" stroke="#1a1a1a" stroke-width="2.29" opacity="0.38" stroke-linecap="round" filter="url(#fb)"/><path d="M178 3 L180 41" stroke="#ffffff" stroke-width="2.86" opacity="0.48" stroke-linecap="round" filter="url(#fb)"/><path d="M202.9 5 L203.9 38" stroke="#1a1a1a" stroke-width="1.94" opacity="0.35" stroke-linecap="round" filter="url(#fb)"/><path d="M201 5 L202 38" stroke="#ffffff" stroke-width="2.42" opacity="0.43" stroke-linecap="round" filter="url(#fb)"/><path d="M182.6 41 L202.6 39" stroke="#1a1a1a" stroke-width="1.58" opacity="0.27" stroke-linecap="round" filter="url(#fb)"/><path d="M181 41 L201 39" stroke="#ffffff" stroke-width="1.98" opacity="0.34" stroke-linecap="round" filter="url(#fb)"/><path d="M185.2 3 L201.2 4" stroke="#1a1a1a" stroke-width="1.23" opacity="0.15" stroke-linecap="round" filter="url(#fb)"/><path d="M184 3 L200 4" stroke="#ffffff" stroke-width="1.54" opacity="0.19" stroke-linecap="round" filter="url(#fb)"/><path d="M183.8 44 L186.8 92" stroke="#1a1a1a" stroke-width="1.76" opacity="0.25" stroke-linecap="round" filter="url(#fb)"/><path d="M182 44 L185 92" stroke="#ffffff" stroke-width="2.20" opacity="0.31" stroke-linecap="round" filter="url(#fb)"/><path d="M245.5 30 L250.5 78" stroke="#1a1a1a" stroke-width="2.46" opacity="0.31" stroke-linecap="round" filter="url(#fb)"/><path d="M243 30 L248 78" stroke="#ffffff" stroke-width="3.08" opacity="0.38" stroke-linecap="round" filter="url(#fb)"/><ellipse cx="248" cy="61" rx="4.5" ry="8" fill="#f0f0f0" opacity="0.36" filter="url(#fb)"/><path d="M237.4 18 L241.4 40" stroke="#1a1a1a" stroke-width="1.41" opacity="0.23" stroke-linecap="round" filter="url(#fb)"/><path d="M236 18 L240 40" stroke="#ffffff" stroke-width="1.76" opacity="0.29" stroke-linecap="round" filter="url(#fb)"/><path d="M312.1 20 L310.1 66" stroke="#1a1a1a" stroke-width="2.11" opacity="0.35" stroke-linecap="round" filter="url(#fb)"/><path d="M310 20 L308 66" stroke="#ffffff" stroke-width="2.64" opacity="0.43" stroke-linecap="round" filter="url(#fb)"/><path d="M271.4 62 L307.4 66" stroke="#1a1a1a" stroke-width="1.41" opacity="0.21" stroke-linecap="round" filter="url(#fb)"/><path d="M270 62 L306 66" stroke="#ffffff" stroke-width="1.76" opacity="0.26" stroke-linecap="round" filter="url(#fb)"/><path d="M273.2 22 L275.2 60" stroke="#1a1a1a" stroke-width="1.23" opacity="0.17" stroke-linecap="round" filter="url(#fb)"/><path d="M272 22 L274 60" stroke="#ffffff" stroke-width="1.54" opacity="0.22" stroke-linecap="round" filter="url(#fb)"/><path d="M379.4 8 L381.4 48" stroke="#1a1a1a" stroke-width="1.41" opacity="0.21" stroke-linecap="round" filter="url(#fb)"/><path d="M378 8 L380 48" stroke="#ffffff" stroke-width="1.76" opacity="0.26" stroke-linecap="round" filter="url(#fb)"/><path d="M399.4 10 L398.4 55" stroke="#1a1a1a" stroke-width="1.41" opacity="0.21" stroke-linecap="round" filter="url(#fb)"/><path d="M398 10 L397 55" stroke="#ffffff" stroke-width="1.76" opacity="0.26" stroke-linecap="round" filter="url(#fb)"/><path d="M421.2 30 L423.2 70" stroke="#1a1a1a" stroke-width="1.23" opacity="0.17" stroke-linecap="round" filter="url(#fb)"/><path d="M420 30 L422 70" stroke="#ffffff" stroke-width="1.54" opacity="0.22" stroke-linecap="round" filter="url(#fb)"/><path d="M180 76 H440" stroke="#fff" stroke-width="1" opacity="0.15"/></svg>
<div class="t" style="left:2px;top:7.9px;font-size:9.0px;font-weight:bold;transform:scaleY(1.16);color:#111">t: 51.514</div>
<div class="t" style="left:276.5px;top:3px;font-size:9.5px;font-weight:bold;color:#111">x</div>
<div class="t" style="left:55.40px;top:20.2px;font-size:11px;font-weight:bold;transform:scaleY(1.1);color:#111">300</div>
<div class="t" style="left:99.00px;top:20.2px;font-size:11px;font-weight:bold;transform:scaleY(1.1);color:#111">320</div>
<div class="t" style="left:142.60px;top:20.2px;font-size:11px;font-weight:bold;transform:scaleY(1.1);color:#111">340</div>
<div class="t" style="left:186.20px;top:20.2px;font-size:11px;font-weight:bold;transform:scaleY(1.1);color:#111">360</div>
<div class="t" style="left:229.80px;top:20.2px;font-size:11px;font-weight:bold;transform:scaleY(1.1);color:#111">380</div>
<div class="t" style="left:273.40px;top:20.2px;font-size:11px;font-weight:bold;transform:scaleY(1.1);color:#111">400</div>
<div class="t" style="left:317.00px;top:20.2px;font-size:11px;font-weight:bold;transform:scaleY(1.1);color:#111">420</div>
<div class="t" style="left:360.60px;top:20.2px;font-size:11px;font-weight:bold;transform:scaleY(1.1);color:#111">440</div>
<div class="t" style="left:404.20px;top:20.2px;font-size:11px;font-weight:bold;transform:scaleY(1.1);color:#111">460</div>
<div class="t" style="left:447.80px;top:20.2px;font-size:11px;font-weight:bold;transform:scaleY(1.1);color:#111">480</div>
<div class="t" style="left:480.00px;top:20.2px;font-size:11px;font-weight:bold;transform:scaleY(1.1);color:#111">500</div>
<div class="t" style="left:27.60px;top:36.50px;font-size:11px;font-weight:bold;transform:scaleY(1.1);color:#111">240</div>
<div class="t" style="left:27.60px;top:80.40px;font-size:11px;font-weight:bold;transform:scaleY(1.1);color:#111">260</div>
<div class="t" style="left:27.60px;top:124.30px;font-size:11px;font-weight:bold;transform:scaleY(1.1);color:#111">280</div>
<div class="t" style="left:27.60px;top:164.40px;font-size:11px;font-weight:bold;transform:scaleY(1.1);color:#111">300</div>
<svg style="position:absolute;left:0;top:0" width="600" height="182"><path d="M59 34.5 H499" stroke="#000" stroke-width="1"/><path d="M53.5 41 V173" stroke="#000" stroke-width="1.1"/><path d="M65.5 31.5 V37" stroke="#000" stroke-width="1.1"/><path d="M108.5 31.5 V37" stroke="#000" stroke-width="1.1"/><path d="M152.5 31.5 V37" stroke="#000" stroke-width="1.1"/><path d="M195.5 31.5 V37" stroke="#000" stroke-width="1.1"/><path d="M239.5 31.5 V37" stroke="#000" stroke-width="1.1"/><path d="M283.5 31.5 V37" stroke="#000" stroke-width="1.1"/><path d="M326.5 31.5 V37" stroke="#000" stroke-width="1.1"/><path d="M370.5 31.5 V37" stroke="#000" stroke-width="1.1"/><path d="M413.5 31.5 V37" stroke="#000" stroke-width="1.1"/><path d="M457.5 31.5 V37" stroke="#000" stroke-width="1.1"/><path d="M501.5 31.5 V37" stroke="#000" stroke-width="1.1"/><path d="M73.5 32.5 V34.5" stroke="#000" stroke-width="1"/><path d="M82.5 32.5 V34.5" stroke="#000" stroke-width="1"/><path d="M91.5 32.5 V34.5" stroke="#000" stroke-width="1"/><path d="M99.5 32.5 V34.5" stroke="#000" stroke-width="1"/><path d="M117.5 32.5 V34.5" stroke="#000" stroke-width="1"/><path d="M126.5 32.5 V34.5" stroke="#000" stroke-width="1"/><path d="M134.5 32.5 V34.5" stroke="#000" stroke-width="1"/><path d="M143.5 32.5 V34.5" stroke="#000" stroke-width="1"/><path d="M161.5 32.5 V34.5" stroke="#000" stroke-width="1"/><path d="M169.5 32.5 V34.5" stroke="#000" stroke-width="1"/><path d="M178.5 32.5 V34.5" stroke="#000" stroke-width="1"/><path d="M187.5 32.5 V34.5" stroke="#000" stroke-width="1"/><path d="M204.5 32.5 V34.5" stroke="#000" stroke-width="1"/><path d="M213.5 32.5 V34.5" stroke="#000" stroke-width="1"/><path d="M222.5 32.5 V34.5" stroke="#000" stroke-width="1"/><path d="M230.5 32.5 V34.5" stroke="#000" stroke-width="1"/><path d="M248.5 32.5 V34.5" stroke="#000" stroke-width="1"/><path d="M256.5 32.5 V34.5" stroke="#000" stroke-width="1"/><path d="M265.5 32.5 V34.5" stroke="#000" stroke-width="1"/><path d="M274.5 32.5 V34.5" stroke="#000" stroke-width="1"/><path d="M291.5 32.5 V34.5" stroke="#000" stroke-width="1"/><path d="M300.5 32.5 V34.5" stroke="#000" stroke-width="1"/><path d="M309.5 32.5 V34.5" stroke="#000" stroke-width="1"/><path d="M317.5 32.5 V34.5" stroke="#000" stroke-width="1"/><path d="M335.5 32.5 V34.5" stroke="#000" stroke-width="1"/><path d="M344.5 32.5 V34.5" stroke="#000" stroke-width="1"/><path d="M352.5 32.5 V34.5" stroke="#000" stroke-width="1"/><path d="M361.5 32.5 V34.5" stroke="#000" stroke-width="1"/><path d="M379.5 32.5 V34.5" stroke="#000" stroke-width="1"/><path d="M387.5 32.5 V34.5" stroke="#000" stroke-width="1"/><path d="M396.5 32.5 V34.5" stroke="#000" stroke-width="1"/><path d="M405.5 32.5 V34.5" stroke="#000" stroke-width="1"/><path d="M422.5 32.5 V34.5" stroke="#000" stroke-width="1"/><path d="M431.5 32.5 V34.5" stroke="#000" stroke-width="1"/><path d="M440.5 32.5 V34.5" stroke="#000" stroke-width="1"/><path d="M448.5 32.5 V34.5" stroke="#000" stroke-width="1"/><path d="M466.5 32.5 V34.5" stroke="#000" stroke-width="1"/><path d="M474.5 32.5 V34.5" stroke="#000" stroke-width="1"/><path d="M483.5 32.5 V34.5" stroke="#000" stroke-width="1"/><path d="M492.5 32.5 V34.5" stroke="#000" stroke-width="1"/><path d="M48 40.5 H54" stroke="#000" stroke-width="1.1"/><path d="M48 84.5 H54" stroke="#000" stroke-width="1.1"/><path d="M48 128.5 H54" stroke="#000" stroke-width="1.1"/><path d="M48 172.5 H54" stroke="#000" stroke-width="1.1"/><path d="M50.5 49.5 H53.5" stroke="#000" stroke-width="1"/><path d="M50.5 58.5 H53.5" stroke="#000" stroke-width="1"/><path d="M50.5 66.5 H53.5" stroke="#000" stroke-width="1"/><path d="M50.5 75.5 H53.5" stroke="#000" stroke-width="1"/><path d="M50.5 93.5 H53.5" stroke="#000" stroke-width="1"/><path d="M50.5 101.5 H53.5" stroke="#000" stroke-width="1"/><path d="M50.5 110.5 H53.5" stroke="#000" stroke-width="1"/><path d="M50.5 119.5 H53.5" stroke="#000" stroke-width="1"/><path d="M50.5 137.5 H53.5" stroke="#000" stroke-width="1"/><path d="M50.5 145.5 H53.5" stroke="#000" stroke-width="1"/><path d="M50.5 154.5 H53.5" stroke="#000" stroke-width="1"/><path d="M50.5 163.5 H53.5" stroke="#000" stroke-width="1"/><path d="M50.5 173 L53.5 169 L56.5 173 Z" fill="#000"/><path d="M494 32 L499 34.5 L494 37" stroke="#000" fill="none" stroke-width="1"/></svg>
<div class="t" style="left:7.5px;top:100px;font-size:11.5px;font-weight:bold;transform:rotate(-90deg);color:#111">y</div>
</div>
<div style="position:absolute;left:546px;top:197px;width:2px;height:174px;background:#000;"></div>
<div style="position:absolute;left:546px;top:378px;width:2px;height:175px;background:#000;"></div>
<div style="position:absolute;left:546px;top:560px;width:2px;height:175px;background:#000;"></div>
<div class="t" style="left:6px;top:793.5px;font-size:17px;font-weight:bold;letter-spacing:0.2px;color:#111;-webkit-text-stroke:0.35px #111">The Windows mode allows to display up to 25 different cuts</div>
<!--TOOLBAR-->
</body></html>
